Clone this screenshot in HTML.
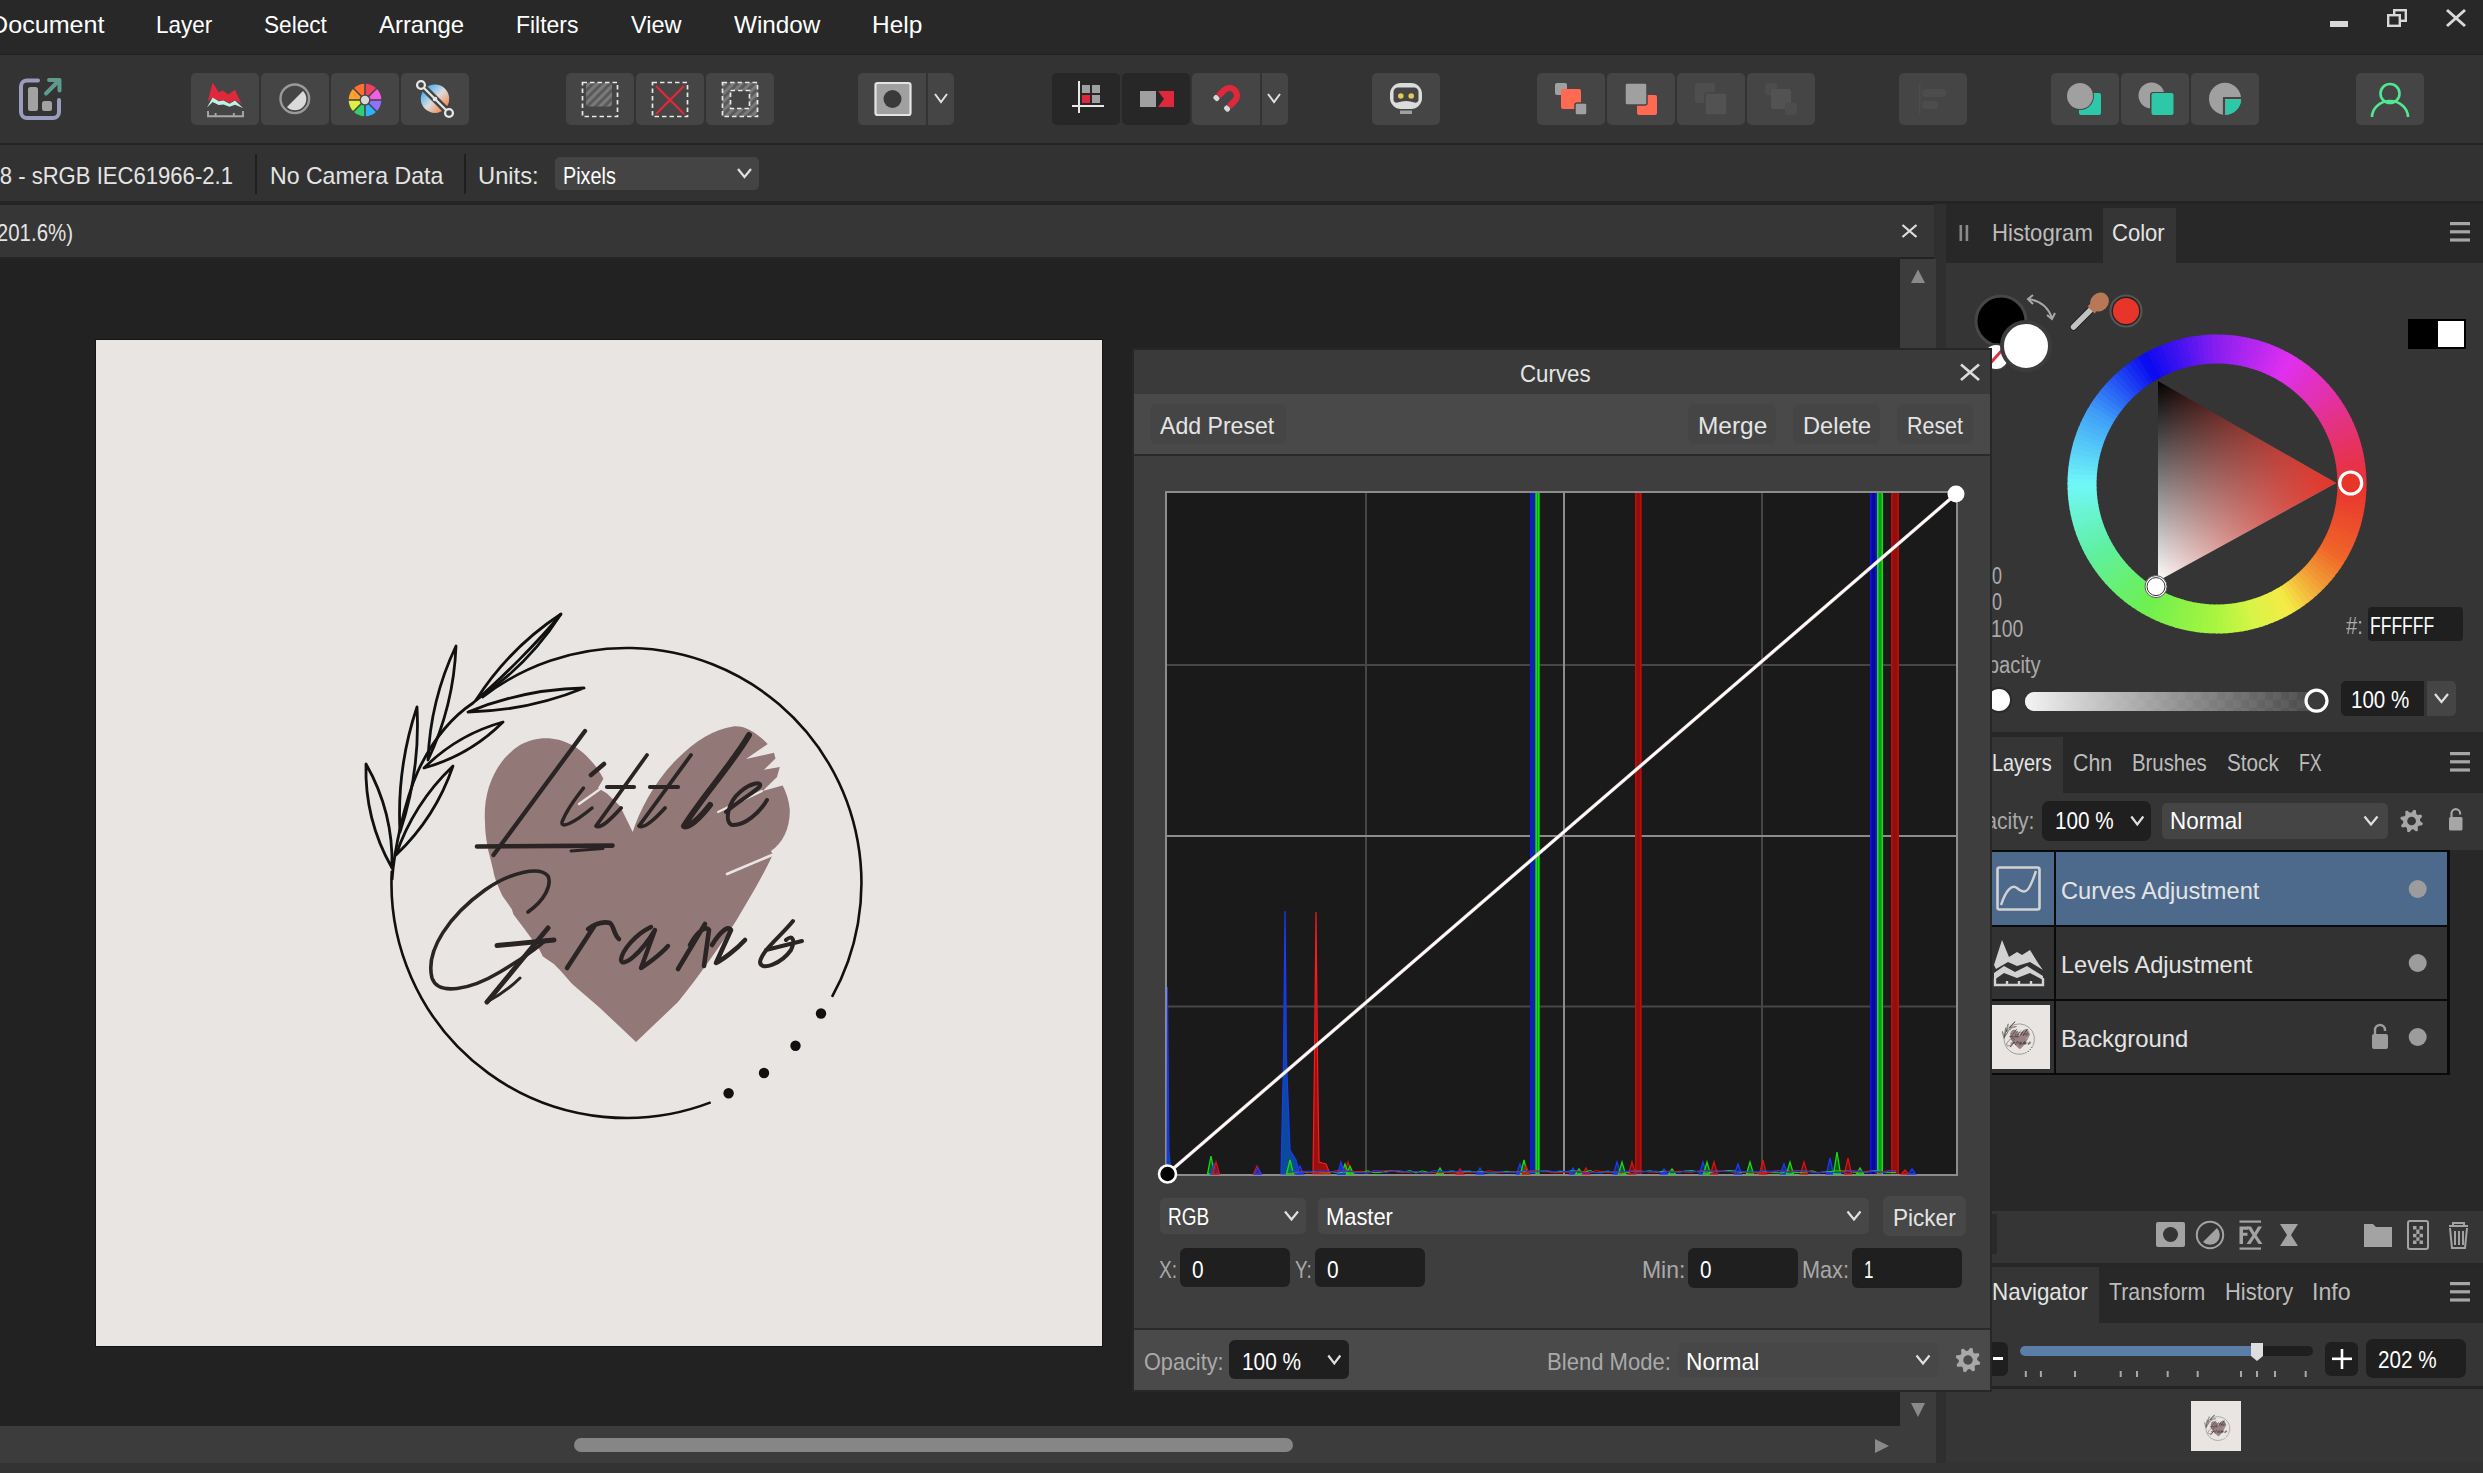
<!DOCTYPE html>
<html><head><meta charset="utf-8"><style>
html,body{margin:0;padding:0;width:2483px;height:1473px;overflow:hidden;background:#222;}
.r{position:absolute;}
.tx{position:absolute;font-family:"Liberation Sans",sans-serif;white-space:nowrap;transform-origin:0 0;}
</style></head><body>
<div class="r" style="left:0px;top:0px;width:2483px;height:54px;background:#282828;"></div>
<div class="r" style="left:0px;top:54px;width:2483px;height:1px;background:#202020;"></div>
<div class="r" style="left:0px;top:55px;width:2483px;height:88px;background:#333333;"></div>
<div class="r" style="left:0px;top:143px;width:2483px;height:2px;background:#232323;"></div>
<div class="r" style="left:0px;top:145px;width:2483px;height:56px;background:#323232;"></div>
<div class="r" style="left:0px;top:201px;width:2483px;height:4px;background:#242424;"></div>
<div class="r" style="left:0px;top:205px;width:1934px;height:52px;background:#363636;"></div>
<div class="r" style="left:0px;top:257px;width:1900px;height:2px;background:#262626;"></div>
<div class="r" style="left:1934px;top:204px;width:12px;height:1269px;background:#2f2f2f;"></div>
<div class="r" style="left:0px;top:259px;width:1900px;height:1167px;background:#222222;"></div>
<div class="r" style="left:1900px;top:259px;width:36px;height:1204px;background:#3c3c3c;"></div>
<div class="r" style="left:0px;top:1426px;width:1900px;height:37px;background:#3c3c3c;"></div>
<div class="r" style="left:0px;top:1463px;width:1946px;height:10px;background:#333333;"></div>
<div class="r" style="left:574px;top:1438px;width:719px;height:14px;background:#868686;border-radius:7px;"></div>
<svg class="r" style="left:0;top:0" width="2483" height="1473"><g fill="#8a8a8a"><polygon points="1911,283 1925,283 1918,269.5"/><polygon points="1911,1403 1925,1403 1918,1417"/><polygon points="1875,1439 1875,1453 1889,1446"/></g></svg>
<div class="r" style="left:191px;top:73px;width:68px;height:52px;background:#454545;border-radius:5px;"></div>
<div class="r" style="left:261px;top:73px;width:68px;height:52px;background:#454545;border-radius:5px;"></div>
<div class="r" style="left:331px;top:73px;width:68px;height:52px;background:#454545;border-radius:5px;"></div>
<div class="r" style="left:401px;top:73px;width:68px;height:52px;background:#454545;border-radius:5px;"></div>
<div class="r" style="left:566px;top:73px;width:68px;height:52px;background:#454545;border-radius:5px;"></div>
<div class="r" style="left:636px;top:73px;width:68px;height:52px;background:#454545;border-radius:5px;"></div>
<div class="r" style="left:706px;top:73px;width:68px;height:52px;background:#454545;border-radius:5px;"></div>
<div class="r" style="left:858px;top:73px;width:68px;height:52px;background:#454545;border-radius:5px 0 0 5px;"></div>
<div class="r" style="left:928px;top:73px;width:26px;height:52px;background:#454545;border-radius:0 5px 5px 0;"></div>
<div class="r" style="left:1052px;top:73px;width:68px;height:52px;background:#272727;border-radius:5px;"></div>
<div class="r" style="left:1122px;top:73px;width:68px;height:52px;background:#272727;border-radius:5px;"></div>
<div class="r" style="left:1192px;top:73px;width:68px;height:52px;background:#454545;border-radius:5px 0 0 5px;"></div>
<div class="r" style="left:1262px;top:73px;width:26px;height:52px;background:#454545;border-radius:0 5px 5px 0;"></div>
<div class="r" style="left:1372px;top:73px;width:68px;height:52px;background:#454545;border-radius:5px;"></div>
<div class="r" style="left:1537px;top:73px;width:68px;height:52px;background:#454545;border-radius:5px;"></div>
<div class="r" style="left:1607px;top:73px;width:68px;height:52px;background:#454545;border-radius:5px;"></div>
<div class="r" style="left:1677px;top:73px;width:68px;height:52px;background:#454545;border-radius:5px;"></div>
<div class="r" style="left:1747px;top:73px;width:68px;height:52px;background:#454545;border-radius:5px;"></div>
<div class="r" style="left:1899px;top:73px;width:68px;height:52px;background:#454545;border-radius:5px;"></div>
<div class="r" style="left:2051px;top:73px;width:68px;height:52px;background:#454545;border-radius:5px;"></div>
<div class="r" style="left:2121px;top:73px;width:68px;height:52px;background:#454545;border-radius:5px;"></div>
<div class="r" style="left:2191px;top:73px;width:68px;height:52px;background:#454545;border-radius:5px;"></div>
<div class="r" style="left:2356px;top:73px;width:68px;height:52px;background:#454545;border-radius:5px;"></div>
<div class="r" style="left:255px;top:154px;width:2px;height:40px;background:#1f1f1f;"></div>
<div class="r" style="left:464px;top:154px;width:2px;height:40px;background:#1f1f1f;"></div>
<div class="r" style="left:555px;top:157px;width:204px;height:33px;background:#444444;border-radius:5px;"></div>
<svg class="r" style="left:0;top:0" width="2483" height="260" viewBox="0 0 2483 260"><defs><linearGradient id="blob" x1="0" y1="0" x2="1" y2="1"><stop offset="0" stop-color="#2a9cf0"/><stop offset="0.5" stop-color="#e8e8f0"/><stop offset="1" stop-color="#f07830"/></linearGradient><pattern id="hatch" width="6" height="6" patternUnits="userSpaceOnUse" patternTransform="rotate(45)"><rect width="6" height="6" fill="#5a5a5a"/><rect width="3" height="6" fill="#7a7a7a"/></pattern></defs><polyline points="738.0,169.0 744.5,177.0 751.0,169.0" fill="none" stroke="#e0e0e0" stroke-width="2.2"/><path d="M38,80.5 H27 a6,6 0 0 0 -6,6 V112 a6,6 0 0 0 6,6 H53 a6,6 0 0 0 6,-6 V100" fill="none" stroke="#9a9cbb" stroke-width="4" stroke-linecap="round"/><rect x="28" y="87" width="10" height="24" rx="2.5" fill="#a2a2a2"/><rect x="42" y="101" width="10" height="10" rx="2.5" fill="#a2a2a2"/><path d="M46,93.5 L57.5,82" stroke="#5f9a8c" stroke-width="4" stroke-linecap="round"/><path d="M49,80 H59.5 V90.5" fill="none" stroke="#5f9a8c" stroke-width="4" stroke-linecap="round" stroke-linejoin="round"/><path d="M207.8,101.5 L212.6,82.5 L218.7,92.2 L222.9,90.4 L228.3,94.6 L235,89.8 L241.5,104 L235,100 L229.5,103 L223.5,100 L218.7,101 L212.6,97.6 Z" fill="#e0283c"/><path d="M207,107.5 L212.6,97.6 L218.7,101.2 L223.5,100.6 L229.5,103.7 L235,100.6 L243,107.9 L235,104.8 L229.5,106.8 L223.5,104.5 L218.7,105 L212.6,102 Z" fill="#bdf3e6"/><path d="M208,111 V116.3 H243 V111 M215.6,113 V116 M233.8,113 V116" fill="none" stroke="#a8a8a8" stroke-width="1.9"/><circle cx="294.8" cy="98.8" r="14.3" fill="none" stroke="#9a9a9a" stroke-width="2.4"/><path d="M303,91 A11.3,11.3 0 0 1 287,107 Z" fill="#dadada"/><path d="M365,100 L365.00,83.70 A16.3,16.3 0 0 1 376.53,88.47 Z" fill="#f04060"/><path d="M365,100 L376.53,88.47 A16.3,16.3 0 0 1 381.30,100.00 Z" fill="#f060e0"/><path d="M365,100 L381.30,100.00 A16.3,16.3 0 0 1 376.53,111.53 Z" fill="#9070ff"/><path d="M365,100 L376.53,111.53 A16.3,16.3 0 0 1 365.00,116.30 Z" fill="#30b0ff"/><path d="M365,100 L365.00,116.30 A16.3,16.3 0 0 1 353.47,111.53 Z" fill="#30d070"/><path d="M365,100 L353.47,111.53 A16.3,16.3 0 0 1 348.70,100.00 Z" fill="#e0f040"/><path d="M365,100 L348.70,100.00 A16.3,16.3 0 0 1 353.47,88.47 Z" fill="#ffa030"/><path d="M365,100 L353.47,88.47 A16.3,16.3 0 0 1 365.00,83.70 Z" fill="#ff7030"/><line x1="365" y1="100" x2="365.00" y2="83.00" stroke="#454545" stroke-width="1.6"/><line x1="365" y1="100" x2="377.02" y2="87.98" stroke="#454545" stroke-width="1.6"/><line x1="365" y1="100" x2="382.00" y2="100.00" stroke="#454545" stroke-width="1.6"/><line x1="365" y1="100" x2="377.02" y2="112.02" stroke="#454545" stroke-width="1.6"/><line x1="365" y1="100" x2="365.00" y2="117.00" stroke="#454545" stroke-width="1.6"/><line x1="365" y1="100" x2="352.98" y2="112.02" stroke="#454545" stroke-width="1.6"/><line x1="365" y1="100" x2="348.00" y2="100.00" stroke="#454545" stroke-width="1.6"/><line x1="365" y1="100" x2="352.98" y2="87.98" stroke="#454545" stroke-width="1.6"/><circle cx="365" cy="100" r="5.5" fill="#454545"/><circle cx="365" cy="100" r="4.2" fill="#d8d8d8"/><defs><linearGradient id="blob2" gradientUnits="userSpaceOnUse" x1="423" y1="87" x2="447" y2="111"><stop offset="0" stop-color="#2aa8f8"/><stop offset="0.5" stop-color="#dcdcdc"/><stop offset="1" stop-color="#f87a30"/></linearGradient><clipPath id="blobclip"><circle cx="435" cy="98.8" r="14.2"/></clipPath></defs><g clip-path="url(#blobclip)"><rect x="418" y="82" width="34" height="34" fill="url(#blob2)"/></g><line x1="421" y1="85" x2="449" y2="113" stroke="#454545" stroke-width="7"/><line x1="421" y1="85" x2="449" y2="113" stroke="#e8e8e8" stroke-width="2.2"/><circle cx="421" cy="85" r="3.9" fill="#454545" stroke="#e8e8e8" stroke-width="2.3"/><circle cx="449" cy="113" r="3.9" fill="#454545" stroke="#e8e8e8" stroke-width="2.3"/><circle cx="435" cy="99" r="2.3" fill="#e8e8e8"/><rect x="586" y="82.5" width="26" height="24" rx="3" fill="url(#hatch)"/><rect x="582.5" y="82.5" width="35" height="34" stroke="#e8e8e8" stroke-width="1.7" stroke-dasharray="4.5,3" fill="none"/><rect x="652.5" y="82.5" width="35" height="34" stroke="#e8e8e8" stroke-width="1.7" stroke-dasharray="4.5,3" fill="none"/><path d="M656,86 L684,114 M684,86 L656,114" stroke="#e0283c" stroke-width="2.4"/><rect x="722.5" y="82.5" width="35" height="34" fill="url(#hatch)"/><rect x="730.5" y="90.5" width="19" height="18" fill="#454545"/><rect x="722.5" y="82.5" width="35" height="34" stroke="#e8e8e8" stroke-width="1.7" stroke-dasharray="4.5,3" fill="none"/><rect x="730.5" y="90.5" width="19" height="18" stroke="#e8e8e8" stroke-width="1.7" stroke-dasharray="4.5,3" fill="none"/><rect x="875.5" y="83" width="35" height="32" rx="2" fill="#a0a0a0" stroke="#e4e4e4" stroke-width="2.2"/><circle cx="892.5" cy="99" r="9" fill="#3a3a3a"/><polyline points="935.0,94.0 941,102.0 947.0,94.0" fill="none" stroke="#e0e0e0" stroke-width="2"/><rect x="1078" y="81" width="2" height="32" fill="#e8e8e8"/><rect x="1072" y="105" width="32" height="2" fill="#e8e8e8"/><rect x="1082" y="85" width="8" height="8" fill="#a0a0a0"/><rect x="1092" y="85" width="8" height="8" fill="#a0a0a0"/><rect x="1082" y="95" width="8" height="8" fill="#e0283c"/><rect x="1092" y="95" width="8" height="8" fill="#a0a0a0"/><rect x="1140" y="91" width="16" height="16" fill="#a0a0a0"/><path d="M1158,91 h16 v16 h-16 l6,-8 z" fill="#e0283c"/><g transform="translate(1229.5 95.5) rotate(45)"><path d="M-7.5,8 V0 A7.5,7.5 0 0 1 7.5,0 V8" fill="none" stroke="#e0283c" stroke-width="6.2"/><rect x="-10.6" y="8.5" width="6.2" height="5" rx="2" fill="#d8d8d8"/><rect x="4.4" y="8.5" width="6.2" height="5" rx="2" fill="#d8d8d8"/></g><polyline points="1268.0,94.0 1274,102.0 1280.0,94.0" fill="none" stroke="#e0e0e0" stroke-width="2"/><rect x="1390" y="83" width="32" height="26" rx="11" fill="#dcdcdc"/><path d="M1398,87.5 H1414 a4.5,4.5 0 0 1 4.5,4.5 V100 a3,3 0 0 1 -4,2.5 Q1406,99.5 1397.5,102.5 a3,3 0 0 1 -4,-2.5 V92 a4.5,4.5 0 0 1 4.5,-4.5 Z" fill="#454545"/><circle cx="1400.8" cy="96" r="2.8" fill="#e8c850"/><circle cx="1411.2" cy="96" r="2.8" fill="#e8c850"/><rect x="1400" y="110.5" width="12" height="3.5" fill="#a0a0a0"/><rect x="1555" y="83" width="12" height="12" rx="2" fill="#a0a0a0"/><rect x="1561" y="89" width="20" height="20" rx="2" fill="#ff6a50"/><rect x="1575" y="103" width="12" height="12" rx="2" fill="#a0a0a0" stroke="#454545" stroke-width="1.5"/><rect x="1565" y="93" width="0" height="0"/><rect x="1637" y="95" width="20" height="20" rx="2" fill="#ff6a50"/><rect x="1625" y="83" width="22" height="22" rx="2" fill="#a0a0a0" stroke="#454545" stroke-width="1.5"/><rect x="1695" y="83" width="20" height="20" rx="2" fill="#4e4e4e"/><rect x="1705" y="93" width="22" height="22" rx="2" fill="#525252" stroke="#454545" stroke-width="1.5"/><rect x="1765" y="83" width="12" height="12" rx="2" fill="#4c4c4c"/><rect x="1771" y="89" width="20" height="20" rx="2" fill="#525252"/><rect x="1785" y="103" width="12" height="12" rx="2" fill="#4c4c4c"/><rect x="1919" y="83" width="1.5" height="31" fill="#4c4c4c"/><rect x="1922" y="89" width="24" height="8" rx="3" fill="#4c4c4c"/><rect x="1922" y="101" width="16" height="8" rx="3" fill="#4c4c4c"/><rect x="2079" y="93" width="22" height="22" rx="2" fill="#2cc8a8"/><circle cx="2080" cy="96" r="14" fill="#454545"/><circle cx="2080" cy="96" r="13" fill="#a0a0a0"/><circle cx="2151.5" cy="95.5" r="13" fill="#a0a0a0"/><rect x="2150" y="92" width="24" height="24" rx="3" fill="#454545"/><rect x="2151.5" y="93" width="22" height="22" rx="2" fill="#2cc8a8"/><circle cx="2225" cy="98.7" r="16" fill="#a0a0a0"/><path d="M2225.5,99.5 h15.7 A16,16 0 0 1 2225.5,114.7 Z" fill="#2cc8a8"/><path d="M2224,114.8 V98 h17.5" fill="none" stroke="#454545" stroke-width="2.2"/><circle cx="2390" cy="93.5" r="9.5" fill="none" stroke="#50e890" stroke-width="2.6"/><path d="M2372,117 A18,16 0 0 1 2408,117" fill="none" stroke="#50e890" stroke-width="2.6"/><rect x="2330" y="21" width="18" height="6" fill="#d8d8d8"/><rect x="2394.2" y="10.2" width="11.6" height="10.6" fill="none" stroke="#d8d8d8" stroke-width="2.4"/><rect x="2388.2" y="15.2" width="11.6" height="10.6" fill="#282828" stroke="#d8d8d8" stroke-width="2.4"/><path d="M2447,10 L2465,26 M2465,10 L2447,26" stroke="#d8d8d8" stroke-width="3"/><path d="M1902.5,225 L1916.5,237 M1916.5,225 L1902.5,237" stroke="#dedede" stroke-width="2.3"/></svg>
<div class="r" style="left:95px;top:339px;width:1008px;height:1008px;background:#141414"></div><div class="r" style="left:96px;top:340px;width:1006px;height:1006px;background:#e9e5e2"></div><svg class="r" style="left:0;top:0" width="1200" height="1400" viewBox="0 0 1200 1400"><path d="M485,822.7 C483,792 494,762 520,745 C535,737 553,735 572,745 C585,752 597,766 603.4,778.7 L598,788 L607,793.4 L620,806 L632.7,831.9 C640,810 654,782 677,759 C695,741 714,729 733,726.4 C746,725 758,734 767.7,744 L746,759 L774,752.8 L775.5,758.5 L764,769.8 L779.8,767 L777,777 L762.7,791 L782.6,785.5 C786,792 789,800 789.8,810 C790,828 783,843 771,851 L772.7,854.6 C765,872 751,896 736,921 C720,946 700,975 678,1002 L636,1042 L600,1008 L572.2,984 L559.4,969.4 L553.9,963.9 L542.9,956.6 L539.2,949.2 L524.5,929 L513.5,914.4 L511.7,908.9 L502.5,896 C497,884 494,876 493.3,870.4 L490.6,859.4 L487.8,848.4 C486,838 485,830 485,822.7 Z" fill="#937878"/>
<g stroke="#e9e5e2" stroke-linecap="round"><line x1="579" y1="804" x2="603" y2="787" stroke-width="2.4"/><line x1="718" y1="812" x2="762" y2="791" stroke-width="2"/><line x1="727" y1="874" x2="772" y2="855" stroke-width="2.6"/></g>
<path d="M481.8,697.8 A235,235 0 0 1 832.0,996.9" fill="none" stroke="#111" stroke-width="2.6"/>
<path d="M710.7,1102.4 A235,235 0 0 1 391.8,870.7" fill="none" stroke="#111" stroke-width="2.6"/>
<circle cx="821" cy="1013.5" r="5.2" fill="#111"/>
<circle cx="795.5" cy="1045.8" r="5.2" fill="#111"/>
<circle cx="764" cy="1073" r="5.2" fill="#111"/>
<circle cx="728.6" cy="1093.3" r="5.2" fill="#111"/>
<g fill="none" stroke="#111" stroke-width="2.8" stroke-linejoin="round">
<path d="M392,880 C394,850 405,800 418,771 C435,735 455,715 473,703 C500,680 540,640 561,614"/>
<path d="M392,868 Q393.6,812.4 366,764 Q364.4,819.6 392,868 Z"/>
<path d="M396,855 Q435.4,817.5 453,766 Q413.6,803.5 396,855 Z"/>
<path d="M400,832 Q420.4,771.1 417,707 Q396.6,767.9 400,832 Z"/>
<path d="M424,768 Q469.5,755.4 503,722 Q457.5,734.6 424,768 Z"/>
<path d="M428,760 Q453.7,705.9 456,646 Q430.3,700.1 428,760 Z"/>
<path d="M468,712 Q528.2,710.8 584,688 Q523.8,689.2 468,712 Z"/>
<path d="M476,700 Q527.7,666.1 561,614 Q509.3,647.9 476,700 Z"/>
</g>
<g fill="none" stroke="#2b2424" stroke-width="4" stroke-linecap="round" stroke-linejoin="round">
<path d="M585,731 L493.5,855" stroke-width="4.3"/>
<path d="M477,846.5 L612.5,845.6" stroke-width="4.6"/><path d="M571,851 L603,848.4" stroke-width="3"/>
<path d="M583.5,788 C574,800 565,814 562,822 C561,829 574,823 592,808" stroke-width="3.5"/><path d="M604,764 L591,775" stroke-width="4.5"/>
<path d="M647,755 L596,826 C601,829 611,819 621,808" stroke-width="3.8"/><path d="M607,787 L634,787" stroke-width="4.2"/>
<path d="M691,755 L639,826 C644,829 655,819 665,808" stroke-width="3.8"/><path d="M650,787 L678,787" stroke-width="4.2"/>
<path d="M749,735 C735,760 700,800 684,826 C688,829 700,818 710,805" stroke-width="6"/>
<path d="M726,812 C740,800 758,790 760,786 C762,781 750,783 740,792 C728,802 724,822 732,825 C745,826 760,812 767,800" stroke-width="4"/>
<path d="M528,912 C545,900 552,885 548,876 C540,866 510,872 485,890 C450,915 425,950 432,978 C438,996 470,990 500,972 C520,960 535,950 546,940" stroke-width="3.6"/>
<path d="M548,928 C530,950 505,980 487,1002" stroke-width="5"/><path d="M487,1002 C500,995 512,986 520,978" stroke-width="3"/>
<path d="M497,945.6 L554,940" stroke-width="5"/>
<path d="M595,925 L567,968 M588,929 C595,924 603,921 610,923 C614,926 614,935 619,939" stroke-width="4.6"/>
<path d="M651,927 C636,934 622,950 621,960 C622,968 640,955 655,930 L641,968 C646,965 660,955 668,946" stroke-width="4.4"/>
<path d="M705,924 L678,969 M690,945 C697,932 706,925 709,930 L704,966 M712,945 C720,932 728,925 731,930 L716,963 C722,960 736,950 745,940" stroke-width="4.6"/>
<path d="M793,921 C782,935 762,950 760,962 C761,972 782,963 791,950 C796,940 792,934 786,940 M766,950 L802,941" stroke-width="4"/>
</g></svg>
<div class="r" style="left:1946px;top:204px;width:537px;height:1269px;background:#353535;"></div>
<div class="r" style="left:1946px;top:204px;width:537px;height:59px;background:#282828;"></div>
<div class="r" style="left:2103px;top:208px;width:73px;height:55px;background:#353535;"></div>
<div class="r" style="left:1946px;top:732px;width:537px;height:4px;background:#272727;"></div>
<div class="r" style="left:1946px;top:736px;width:537px;height:57px;background:#282828;"></div>
<div class="r" style="left:1946px;top:737px;width:117px;height:56px;background:#353535;"></div>
<div class="r" style="left:1946px;top:850px;width:537px;height:361px;background:#282828;"></div>
<div class="r" style="left:1946px;top:850px;width:504px;height:225px;background:#0a0a0a;"></div>
<div class="r" style="left:1946px;top:852px;width:108px;height:73px;background:#4d6a8d;"></div>
<div class="r" style="left:2056px;top:852px;width:391px;height:73px;background:#4d6a8d;"></div>
<div class="r" style="left:1946px;top:927px;width:108px;height:72px;background:#323232;"></div>
<div class="r" style="left:2056px;top:927px;width:391px;height:72px;background:#323232;"></div>
<div class="r" style="left:1946px;top:1001px;width:108px;height:72px;background:#323232;"></div>
<div class="r" style="left:2056px;top:1001px;width:391px;height:72px;background:#323232;"></div>
<div class="r" style="left:1946px;top:1005px;width:104px;height:64px;background:#e9e5e2;"></div>
<div class="r" style="left:1946px;top:1211px;width:537px;height:52px;background:#353535;"></div>
<div class="r" style="left:1946px;top:1263px;width:537px;height:4px;background:#272727;"></div>
<div class="r" style="left:1946px;top:1267px;width:537px;height:56px;background:#282828;"></div>
<div class="r" style="left:1946px;top:1267px;width:153px;height:56px;background:#353535;"></div>
<div class="r" style="left:1991px;top:1214px;width:6px;height:40px;background:#2a2a2a;"></div>
<div class="r" style="left:1946px;top:1386px;width:537px;height:3px;background:#242424;"></div>
<div class="r" style="left:1946px;top:1389px;width:537px;height:73px;background:#363636;"></div>
<div class="r" style="left:1946px;top:1462px;width:537px;height:11px;background:#333333;"></div>
<div class="r" style="left:2191px;top:1401px;width:50px;height:50px;background:#e9e5e2;"></div>
<div class="r" style="left:2368px;top:607px;width:95px;height:34px;background:#1f1f1f;border-radius:4px;"></div>
<div class="r" style="left:2341px;top:681px;width:83px;height:35px;background:#1f1f1f;border-radius:5px 0 0 5px;"></div>
<div class="r" style="left:2427px;top:681px;width:29px;height:35px;background:#454545;border-radius:0 5px 5px 0;"></div>
<div class="r" style="left:2042px;top:801px;width:109px;height:40px;background:#1f1f1f;border-radius:7px;"></div>
<div class="r" style="left:2162px;top:803px;width:226px;height:36px;background:#454545;border-radius:5px;"></div>
<div class="r" style="left:1975px;top:1342px;width:33px;height:34px;background:#1f1f1f;border-radius:6px;"></div>
<div class="r" style="left:2325px;top:1342px;width:33px;height:34px;background:#1f1f1f;border-radius:6px;"></div>
<div class="r" style="left:2366px;top:1339px;width:100px;height:39px;background:#1f1f1f;border-radius:7px;"></div>
<div class="r" style="left:2408px;top:319px;width:58px;height:30px;background:#000;"></div>
<div class="r" style="left:2438px;top:321px;width:26px;height:26px;background:#fff;"></div>
<svg class="r" style="left:0;top:0" width="2483" height="1473" viewBox="0 0 2483 1473"><defs><linearGradient id="triBW" x1="0" y1="0" x2="0" y2="1"><stop offset="0" stop-color="#000"/><stop offset="1" stop-color="#fff"/></linearGradient><linearGradient id="triR" gradientUnits="userSpaceOnUse" x1="2158" y1="0" x2="2336" y2="0"><stop offset="0" stop-color="#e8352a" stop-opacity="0"/><stop offset="1" stop-color="#e8352a" stop-opacity="1"/></linearGradient><pattern id="chk" width="16" height="16" patternUnits="userSpaceOnUse" x="2025" y="692"><rect width="16" height="16" fill="#cfcfcf"/><rect width="8" height="8" fill="#9a9a9a"/><rect x="8" y="8" width="8" height="8" fill="#9a9a9a"/></pattern><linearGradient id="opg" x1="0" y1="0" x2="1" y2="0"><stop offset="0" stop-color="#f4f4f4" stop-opacity="1"/><stop offset="1" stop-color="#353535" stop-opacity="0.85"/></linearGradient><clipPath id="tclip"><rect x="2025" y="692" width="297" height="19" rx="9.5"/></clipPath></defs><rect x="1959.5" y="225" width="2.6" height="16" fill="#8a8a8a"/><rect x="1965.6" y="225" width="2.6" height="16" fill="#8a8a8a"/><rect x="2450" y="222.0" width="20" height="3.2" fill="#a6a6a6"/><rect x="2450" y="230.2" width="20" height="3.2" fill="#a6a6a6"/><rect x="2450" y="238.4" width="20" height="3.2" fill="#a6a6a6"/><rect x="2450" y="752.0" width="20" height="3.2" fill="#a6a6a6"/><rect x="2450" y="760.2" width="20" height="3.2" fill="#a6a6a6"/><rect x="2450" y="768.4" width="20" height="3.2" fill="#a6a6a6"/><rect x="2450" y="1282.0" width="20" height="3.2" fill="#a6a6a6"/><rect x="2450" y="1290.2" width="20" height="3.2" fill="#a6a6a6"/><rect x="2450" y="1298.4" width="20" height="3.2" fill="#a6a6a6"/><circle cx="2001" cy="321" r="25" fill="#000" stroke="#474747" stroke-width="3"/><circle cx="1996" cy="357" r="13" fill="#fff" stroke="#3a3a3a" stroke-width="2"/><path d="M1986,368 L2004,348" stroke="#e03040" stroke-width="3"/><circle cx="2026" cy="346" r="24" fill="#fff" stroke="#3c3c3c" stroke-width="4"/><path d="M2028,299 Q2046,301 2052,318" fill="none" stroke="#a8a8a8" stroke-width="2"/><polyline points="2033,295 2028,299 2033,304" fill="none" stroke="#a8a8a8" stroke-width="2"/><polyline points="2047,315 2052,319 2055,313" fill="none" stroke="#a8a8a8" stroke-width="2"/><line x1="2073.5" y1="327" x2="2091" y2="309.5" stroke="#222" stroke-width="7.5" stroke-linecap="round"/><line x1="2073.5" y1="327" x2="2091" y2="309.5" stroke="#c2c2c2" stroke-width="5.5" stroke-linecap="round"/><ellipse cx="2099.5" cy="302" rx="8.8" ry="10" transform="rotate(45 2099.5 302)" fill="#b87858"/><path d="M2089,305 L2096,312" stroke="#b87858" stroke-width="4"/><circle cx="2126" cy="311" r="15.5" fill="#222" stroke="#555" stroke-width="2.2"/><circle cx="2126" cy="311" r="13.1" fill="#e8352a"/><polygon points="2217.00,334.50 2223.26,334.63 2222.05,363.61 2217.00,363.50" fill="rgb(140, 31, 240)"/><polygon points="2222.22,334.59 2228.47,334.94 2226.24,363.86 2221.21,363.57" fill="rgb(146, 32, 240)"/><polygon points="2227.43,334.86 2233.66,335.43 2230.43,364.25 2225.41,363.79" fill="rgb(152, 33, 240)"/><polygon points="2232.63,335.32 2238.84,336.10 2234.60,364.79 2229.60,364.16" fill="rgb(158, 34, 240)"/><polygon points="2237.81,335.95 2243.99,336.96 2238.75,365.48 2233.77,364.67" fill="rgb(163, 36, 240)"/><polygon points="2242.96,336.77 2249.10,337.99 2242.88,366.31 2237.92,365.33" fill="rgb(169, 37, 240)"/><polygon points="2248.08,337.77 2254.18,339.20 2246.97,367.29 2242.05,366.13" fill="rgb(175, 38, 240)"/><polygon points="2253.17,338.94 2259.21,340.58 2251.02,368.40 2246.15,367.08" fill="rgb(181, 39, 240)"/><polygon points="2258.21,340.29 2264.19,342.14 2255.04,369.66 2250.21,368.17" fill="rgb(186, 40, 240)"/><polygon points="2263.20,341.82 2269.11,343.88 2259.00,371.06 2254.24,369.40" fill="rgb(192, 41, 240)"/><polygon points="2268.13,343.52 2273.97,345.78 2262.92,372.59 2258.21,370.77" fill="rgb(198, 42, 240)"/><polygon points="2273.00,345.39 2278.76,347.85 2266.78,374.26 2262.14,372.27" fill="rgb(203, 44, 240)"/><polygon points="2277.81,347.42 2283.47,350.09 2270.58,376.07 2266.01,373.92" fill="rgb(209, 45, 240)"/><polygon points="2282.54,349.63 2288.11,352.49 2274.31,378.00 2269.82,375.70" fill="rgb(215, 46, 240)"/><polygon points="2287.19,352.00 2292.65,355.05 2277.98,380.07 2273.57,377.60" fill="rgb(221, 47, 240)"/><polygon points="2291.75,354.53 2297.11,357.77 2281.57,382.26 2277.25,379.64" fill="rgb(224, 48, 236)"/><polygon points="2296.22,357.22 2301.46,360.65 2285.08,384.57 2280.86,381.81" fill="rgb(224, 48, 230)"/><polygon points="2300.60,360.06 2305.72,363.67 2288.51,387.01 2284.38,384.10" fill="rgb(224, 48, 223)"/><polygon points="2304.87,363.05 2309.86,366.84 2291.85,389.56 2287.83,386.51" fill="rgb(224, 48, 216)"/><polygon points="2309.04,366.19 2313.89,370.15 2295.10,392.23 2291.19,389.04" fill="rgb(225, 48, 210)"/><polygon points="2313.10,369.48 2317.81,373.60 2298.25,395.02 2294.46,391.69" fill="rgb(225, 48, 203)"/><polygon points="2317.04,372.90 2321.60,377.19 2301.31,397.91 2297.63,394.45" fill="rgb(225, 48, 196)"/><polygon points="2320.85,376.46 2325.26,380.90 2304.26,400.90 2300.71,397.32" fill="rgb(226, 49, 190)"/><polygon points="2324.54,380.15 2328.80,384.74 2307.11,404.00 2303.68,400.29" fill="rgb(226, 49, 183)"/><polygon points="2328.10,383.96 2332.19,388.71 2309.85,407.19 2306.55,403.37" fill="rgb(226, 49, 176)"/><polygon points="2331.52,387.90 2335.45,392.78 2312.47,410.48 2309.31,406.54" fill="rgb(226, 49, 170)"/><polygon points="2334.81,391.96 2338.56,396.97 2314.98,413.85 2311.96,409.81" fill="rgb(227, 49, 163)"/><polygon points="2337.95,396.13 2341.52,401.27 2317.37,417.32 2314.49,413.17" fill="rgb(227, 49, 156)"/><polygon points="2340.94,400.40 2344.33,405.66 2319.63,420.86 2316.90,416.62" fill="rgb(227, 49, 150)"/><polygon points="2343.78,404.78 2346.99,410.16 2321.77,424.48 2319.19,420.14" fill="rgb(227, 49, 143)"/><polygon points="2346.47,409.25 2349.49,414.74 2323.79,428.17 2321.36,423.75" fill="rgb(228, 50, 137)"/><polygon points="2349.00,413.81 2351.82,419.40 2325.67,431.93 2323.40,427.43" fill="rgb(228, 50, 131)"/><polygon points="2351.37,418.46 2354.00,424.15 2327.42,435.76 2325.30,431.18" fill="rgb(228, 50, 125)"/><polygon points="2353.58,423.19 2356.00,428.97 2329.04,439.64 2327.08,434.99" fill="rgb(228, 50, 119)"/><polygon points="2355.61,428.00 2357.84,433.85 2330.52,443.58 2328.73,438.86" fill="rgb(229, 50, 113)"/><polygon points="2357.48,432.87 2359.50,438.80 2331.86,447.56 2330.23,442.79" fill="rgb(229, 50, 107)"/><polygon points="2359.18,437.80 2360.99,443.80 2333.06,451.60 2331.60,446.76" fill="rgb(229, 50, 101)"/><polygon points="2360.71,442.79 2362.31,448.85 2334.12,455.67 2332.83,450.79" fill="rgb(230, 50, 95)"/><polygon points="2362.06,447.83 2363.45,453.94 2335.04,459.77 2333.92,454.85" fill="rgb(230, 50, 89)"/><polygon points="2363.23,452.92 2364.41,459.07 2335.81,463.90 2334.87,458.95" fill="rgb(230, 50, 83)"/><polygon points="2364.23,458.04 2365.19,464.23 2336.44,468.06 2335.67,463.08" fill="rgb(230, 50, 77)"/><polygon points="2365.05,463.19 2365.79,469.41 2336.92,472.24 2336.33,467.23" fill="rgb(231, 50, 71)"/><polygon points="2365.68,468.37 2366.20,474.61 2337.26,476.43 2336.84,471.40" fill="rgb(231, 50, 65)"/><polygon points="2366.14,473.57 2366.44,479.83 2337.45,480.64 2337.21,475.59" fill="rgb(231, 50, 59)"/><polygon points="2366.41,478.78 2366.50,485.04 2337.50,484.84 2337.43,479.79" fill="rgb(231, 50, 53)"/><polygon points="2366.50,484.00 2366.37,490.26 2337.39,489.05 2337.50,484.00" fill="rgb(232, 51, 49)"/><polygon points="2366.41,489.22 2366.06,495.47 2337.14,493.24 2337.43,488.21" fill="rgb(232, 55, 49)"/><polygon points="2366.14,494.43 2365.57,500.66 2336.75,497.43 2337.21,492.41" fill="rgb(233, 58, 48)"/><polygon points="2365.68,499.63 2364.90,505.84 2336.21,501.60 2336.84,496.60" fill="rgb(233, 61, 47)"/><polygon points="2365.05,504.81 2364.04,510.99 2335.52,505.75 2336.33,500.77" fill="rgb(234, 65, 47)"/><polygon points="2364.23,509.96 2363.01,516.10 2334.69,509.88 2335.67,504.92" fill="rgb(234, 68, 46)"/><polygon points="2363.23,515.08 2361.80,521.18 2333.71,513.97 2334.87,509.05" fill="rgb(235, 71, 45)"/><polygon points="2362.06,520.17 2360.42,526.21 2332.60,518.02 2333.92,513.15" fill="rgb(236, 75, 45)"/><polygon points="2360.71,525.21 2358.86,531.19 2331.34,522.04 2332.83,517.21" fill="rgb(236, 78, 44)"/><polygon points="2359.18,530.20 2357.12,536.11 2329.94,526.00 2331.60,521.24" fill="rgb(237, 81, 43)"/><polygon points="2357.48,535.13 2355.22,540.97 2328.41,529.92 2330.23,525.21" fill="rgb(237, 85, 43)"/><polygon points="2355.61,540.00 2353.15,545.76 2326.74,533.78 2328.73,529.14" fill="rgb(238, 88, 42)"/><polygon points="2353.58,544.81 2350.91,550.47 2324.93,537.58 2327.08,533.01" fill="rgb(238, 91, 41)"/><polygon points="2351.37,549.54 2348.51,555.11 2323.00,541.31 2325.30,536.82" fill="rgb(239, 95, 41)"/><polygon points="2349.00,554.19 2345.95,559.65 2320.93,544.98 2323.40,540.57" fill="rgb(239, 98, 40)"/><polygon points="2346.47,558.75 2343.23,564.11 2318.74,548.57 2321.36,544.25" fill="rgb(240, 104, 41)"/><polygon points="2343.78,563.22 2340.35,568.46 2316.43,552.08 2319.19,547.86" fill="rgb(240, 112, 43)"/><polygon points="2340.94,567.60 2337.33,572.72 2313.99,555.51 2316.90,551.38" fill="rgb(240, 120, 45)"/><polygon points="2337.95,571.87 2334.16,576.86 2311.44,558.85 2314.49,554.83" fill="rgb(240, 128, 47)"/><polygon points="2334.81,576.04 2330.85,580.89 2308.77,562.10 2311.96,558.19" fill="rgb(241, 136, 49)"/><polygon points="2331.52,580.10 2327.40,584.81 2305.98,565.25 2309.31,561.46" fill="rgb(241, 144, 51)"/><polygon points="2328.10,584.04 2323.81,588.60 2303.09,568.31 2306.55,564.63" fill="rgb(241, 152, 53)"/><polygon points="2324.54,587.85 2320.10,592.26 2300.10,571.26 2303.68,567.71" fill="rgb(242, 160, 55)"/><polygon points="2320.85,591.54 2316.26,595.80 2297.00,574.11 2300.71,570.68" fill="rgb(242, 170, 57)"/><polygon points="2317.04,595.10 2312.29,599.19 2293.81,576.85 2297.63,573.55" fill="rgb(242, 180, 59)"/><polygon points="2313.10,598.52 2308.22,602.45 2290.52,579.47 2294.46,576.31" fill="rgb(243, 190, 61)"/><polygon points="2309.04,601.81 2304.03,605.56 2287.15,581.98 2291.19,578.96" fill="rgb(243, 200, 63)"/><polygon points="2304.87,604.95 2299.73,608.52 2283.68,584.37 2287.83,581.49" fill="rgb(244, 210, 65)"/><polygon points="2300.60,607.94 2295.34,611.33 2280.14,586.63 2284.38,583.90" fill="rgb(244, 220, 67)"/><polygon points="2296.22,610.78 2290.84,613.99 2276.52,588.77 2280.86,586.19" fill="rgb(244, 230, 69)"/><polygon points="2291.75,613.47 2286.26,616.49 2272.83,590.79 2277.25,588.36" fill="rgb(243, 235, 70)"/><polygon points="2287.19,616.00 2281.60,618.82 2269.07,592.67 2273.57,590.40" fill="rgb(239, 237, 70)"/><polygon points="2282.54,618.37 2276.85,621.00 2265.24,594.42 2269.82,592.30" fill="rgb(235, 238, 70)"/><polygon points="2277.81,620.58 2272.03,623.00 2261.36,596.04 2266.01,594.08" fill="rgb(231, 239, 70)"/><polygon points="2273.00,622.61 2267.15,624.84 2257.42,597.52 2262.14,595.73" fill="rgb(227, 241, 70)"/><polygon points="2268.13,624.48 2262.20,626.50 2253.44,598.86 2258.21,597.23" fill="rgb(223, 242, 70)"/><polygon points="2263.20,626.18 2257.20,627.99 2249.40,600.06 2254.24,598.60" fill="rgb(219, 243, 70)"/><polygon points="2258.21,627.71 2252.15,629.31 2245.33,601.12 2250.21,599.83" fill="rgb(215, 245, 70)"/><polygon points="2253.17,629.06 2247.06,630.45 2241.23,602.04 2246.15,600.92" fill="rgb(209, 245, 69)"/><polygon points="2248.08,630.23 2241.93,631.41 2237.10,602.81 2242.05,601.87" fill="rgb(203, 245, 68)"/><polygon points="2242.96,631.23 2236.77,632.19 2232.94,603.44 2237.92,602.67" fill="rgb(197, 245, 67)"/><polygon points="2237.81,632.05 2231.59,632.79 2228.76,603.92 2233.77,603.33" fill="rgb(191, 245, 66)"/><polygon points="2232.63,632.68 2226.39,633.20 2224.57,604.26 2229.60,603.84" fill="rgb(185, 245, 66)"/><polygon points="2227.43,633.14 2221.17,633.44 2220.36,604.45 2225.41,604.21" fill="rgb(179, 245, 65)"/><polygon points="2222.22,633.41 2215.96,633.50 2216.16,604.50 2221.21,604.43" fill="rgb(173, 245, 64)"/><polygon points="2217.00,633.50 2210.74,633.37 2211.95,604.39 2217.00,604.50" fill="rgb(168, 244, 64)"/><polygon points="2211.78,633.41 2205.53,633.06 2207.76,604.14 2212.79,604.43" fill="rgb(164, 244, 65)"/><polygon points="2206.57,633.14 2200.34,632.57 2203.57,603.75 2208.59,604.21" fill="rgb(160, 244, 66)"/><polygon points="2201.37,632.68 2195.16,631.90 2199.40,603.21 2204.40,603.84" fill="rgb(156, 243, 67)"/><polygon points="2196.19,632.05 2190.01,631.04 2195.25,602.52 2200.23,603.33" fill="rgb(152, 243, 68)"/><polygon points="2191.04,631.23 2184.90,630.01 2191.12,601.69 2196.08,602.67" fill="rgb(148, 243, 69)"/><polygon points="2185.92,630.23 2179.82,628.80 2187.03,600.71 2191.95,601.87" fill="rgb(144, 242, 70)"/><polygon points="2180.83,629.06 2174.79,627.42 2182.98,599.60 2187.85,600.92" fill="rgb(140, 242, 72)"/><polygon points="2175.79,627.71 2169.81,625.86 2178.96,598.34 2183.79,599.83" fill="rgb(136, 242, 73)"/><polygon points="2170.80,626.18 2164.89,624.12 2175.00,596.94 2179.76,598.60" fill="rgb(132, 241, 74)"/><polygon points="2165.87,624.48 2160.03,622.22 2171.08,595.41 2175.79,597.23" fill="rgb(128, 241, 75)"/><polygon points="2161.00,622.61 2155.24,620.15 2167.22,593.74 2171.86,595.73" fill="rgb(124, 241, 76)"/><polygon points="2156.19,620.58 2150.53,617.91 2163.42,591.93 2167.99,594.08" fill="rgb(120, 240, 77)"/><polygon points="2151.46,618.37 2145.89,615.51 2159.69,590.00 2164.18,592.30" fill="rgb(116, 240, 78)"/><polygon points="2146.81,616.00 2141.35,612.95 2156.02,587.93 2160.43,590.40" fill="rgb(112, 240, 79)"/><polygon points="2142.25,613.47 2136.89,610.23 2152.43,585.74 2156.75,588.36" fill="rgb(109, 240, 82)"/><polygon points="2137.78,610.78 2132.54,607.35 2148.92,583.43 2153.14,586.19" fill="rgb(108, 240, 88)"/><polygon points="2133.40,607.94 2128.28,604.33 2145.49,580.99 2149.62,583.90" fill="rgb(107, 240, 93)"/><polygon points="2129.13,604.95 2124.14,601.16 2142.15,578.44 2146.17,581.49" fill="rgb(106, 240, 98)"/><polygon points="2124.96,601.81 2120.11,597.85 2138.90,575.77 2142.81,578.96" fill="rgb(105, 240, 104)"/><polygon points="2120.90,598.52 2116.19,594.40 2135.75,572.98 2139.54,576.31" fill="rgb(104, 240, 109)"/><polygon points="2116.96,595.10 2112.40,590.81 2132.69,570.09 2136.37,573.55" fill="rgb(103, 240, 114)"/><polygon points="2113.15,591.54 2108.74,587.10 2129.74,567.10 2133.29,570.68" fill="rgb(103, 240, 120)"/><polygon points="2109.46,587.85 2105.20,583.26 2126.89,564.00 2130.32,567.71" fill="rgb(102, 240, 125)"/><polygon points="2105.90,584.04 2101.81,579.29 2124.15,560.81 2127.45,564.63" fill="rgb(101, 240, 130)"/><polygon points="2102.48,580.10 2098.55,575.22 2121.53,557.52 2124.69,561.46" fill="rgb(100, 240, 136)"/><polygon points="2099.19,576.04 2095.44,571.03 2119.02,554.15 2122.04,558.19" fill="rgb(99, 240, 141)"/><polygon points="2096.05,571.87 2092.48,566.73 2116.63,550.68 2119.51,554.83" fill="rgb(98, 240, 146)"/><polygon points="2093.06,567.60 2089.67,562.34 2114.37,547.14 2117.10,551.38" fill="rgb(97, 240, 152)"/><polygon points="2090.22,563.22 2087.01,557.84 2112.23,543.52 2114.81,547.86" fill="rgb(96, 240, 157)"/><polygon points="2087.53,558.75 2084.51,553.26 2110.21,539.83 2112.64,544.25" fill="rgb(96, 240, 162)"/><polygon points="2085.00,554.19 2082.18,548.60 2108.33,536.07 2110.60,540.57" fill="rgb(97, 240, 168)"/><polygon points="2082.63,549.54 2080.00,543.85 2106.58,532.24 2108.70,536.82" fill="rgb(98, 241, 174)"/><polygon points="2080.42,544.81 2078.00,539.03 2104.96,528.36 2106.92,533.01" fill="rgb(99, 241, 180)"/><polygon points="2078.39,540.00 2076.16,534.15 2103.48,524.42 2105.27,529.14" fill="rgb(100, 242, 186)"/><polygon points="2076.52,535.13 2074.50,529.20 2102.14,520.44 2103.77,525.21" fill="rgb(101, 242, 192)"/><polygon points="2074.82,530.20 2073.01,524.20 2100.94,516.40 2102.40,521.24" fill="rgb(102, 243, 198)"/><polygon points="2073.29,525.21 2071.69,519.15 2099.88,512.33 2101.17,517.21" fill="rgb(104, 244, 204)"/><polygon points="2071.94,520.17 2070.55,514.06 2098.96,508.23 2100.08,513.15" fill="rgb(105, 244, 209)"/><polygon points="2070.77,515.08 2069.59,508.93 2098.19,504.10 2099.13,509.05" fill="rgb(106, 245, 215)"/><polygon points="2069.77,509.96 2068.81,503.77 2097.56,499.94 2098.33,504.92" fill="rgb(107, 245, 221)"/><polygon points="2068.95,504.81 2068.21,498.59 2097.08,495.76 2097.67,500.77" fill="rgb(108, 246, 227)"/><polygon points="2068.32,499.63 2067.80,493.39 2096.74,491.57 2097.16,496.60" fill="rgb(109, 246, 233)"/><polygon points="2067.86,494.43 2067.56,488.17 2096.55,487.36 2096.79,492.41" fill="rgb(110, 247, 239)"/><polygon points="2067.59,489.22 2067.50,482.96 2096.50,483.16 2096.57,488.21" fill="rgb(111, 247, 245)"/><polygon points="2067.50,484.00 2067.63,477.74 2096.61,478.95 2096.50,484.00" fill="rgb(110, 245, 248)"/><polygon points="2067.59,478.78 2067.94,472.53 2096.86,474.76 2096.57,479.79" fill="rgb(107, 239, 248)"/><polygon points="2067.86,473.57 2068.43,467.34 2097.25,470.57 2096.79,475.59" fill="rgb(104, 233, 248)"/><polygon points="2068.32,468.37 2069.10,462.16 2097.79,466.40 2097.16,471.40" fill="rgb(100, 227, 248)"/><polygon points="2068.95,463.19 2069.96,457.01 2098.48,462.25 2097.67,467.23" fill="rgb(97, 221, 248)"/><polygon points="2069.77,458.04 2070.99,451.90 2099.31,458.12 2098.33,463.08" fill="rgb(94, 215, 248)"/><polygon points="2070.77,452.92 2072.20,446.82 2100.29,454.03 2099.13,458.95" fill="rgb(91, 209, 248)"/><polygon points="2071.94,447.83 2073.58,441.79 2101.40,449.98 2100.08,454.85" fill="rgb(88, 204, 248)"/><polygon points="2073.29,442.79 2075.14,436.81 2102.66,445.96 2101.17,450.79" fill="rgb(84, 198, 248)"/><polygon points="2074.82,437.80 2076.88,431.89 2104.06,442.00 2102.40,446.76" fill="rgb(81, 192, 248)"/><polygon points="2076.52,432.87 2078.78,427.03 2105.59,438.08 2103.77,442.79" fill="rgb(78, 186, 248)"/><polygon points="2078.39,428.00 2080.85,422.24 2107.26,434.22 2105.27,438.86" fill="rgb(75, 180, 248)"/><polygon points="2080.42,423.19 2083.09,417.53 2109.07,430.42 2106.92,434.99" fill="rgb(72, 174, 248)"/><polygon points="2082.63,418.46 2085.49,412.89 2111.00,426.69 2108.70,431.18" fill="rgb(68, 168, 248)"/><polygon points="2085.00,413.81 2088.05,408.35 2113.07,423.02 2110.60,427.43" fill="rgb(65, 162, 248)"/><polygon points="2087.53,409.25 2090.77,403.89 2115.26,419.43 2112.64,423.75" fill="rgb(62, 155, 247)"/><polygon points="2090.22,404.78 2093.65,399.54 2117.57,415.92 2114.81,420.14" fill="rgb(58, 145, 247)"/><polygon points="2093.06,400.40 2096.67,395.28 2120.01,412.49 2117.10,416.62" fill="rgb(55, 135, 246)"/><polygon points="2096.05,396.13 2099.84,391.14 2122.56,409.15 2119.51,413.17" fill="rgb(51, 125, 246)"/><polygon points="2099.19,391.96 2103.15,387.11 2125.23,405.90 2122.04,409.81" fill="rgb(47, 115, 245)"/><polygon points="2102.48,387.90 2106.60,383.19 2128.02,402.75 2124.69,406.54" fill="rgb(44, 105, 245)"/><polygon points="2105.90,383.96 2110.19,379.40 2130.91,399.69 2127.45,403.37" fill="rgb(40, 95, 244)"/><polygon points="2109.46,380.15 2113.90,375.74 2133.90,396.74 2130.32,400.29" fill="rgb(37, 85, 244)"/><polygon points="2113.15,376.46 2117.74,372.20 2137.00,393.89 2133.29,397.32" fill="rgb(33, 75, 243)"/><polygon points="2116.96,372.90 2121.71,368.81 2140.19,391.15 2136.37,394.45" fill="rgb(29, 65, 242)"/><polygon points="2120.90,369.48 2125.78,365.55 2143.48,388.53 2139.54,391.69" fill="rgb(26, 55, 242)"/><polygon points="2124.96,366.19 2129.97,362.44 2146.85,386.02 2142.81,389.04" fill="rgb(22, 44, 241)"/><polygon points="2129.13,363.05 2134.27,359.48 2150.32,383.63 2146.17,386.51" fill="rgb(19, 35, 241)"/><polygon points="2133.40,360.06 2138.66,356.67 2153.86,381.37 2149.62,384.10" fill="rgb(15, 25, 240)"/><polygon points="2137.78,357.22 2143.16,354.01 2157.48,379.23 2153.14,381.81" fill="rgb(11, 15, 240)"/><polygon points="2142.25,354.53 2147.74,351.51 2161.17,377.21 2156.75,379.64" fill="rgb(14, 10, 240)"/><polygon points="2146.81,352.00 2152.40,349.18 2164.93,375.33 2160.43,377.60" fill="rgb(22, 12, 240)"/><polygon points="2151.46,349.63 2157.15,347.00 2168.76,373.58 2164.18,375.70" fill="rgb(30, 13, 240)"/><polygon points="2156.19,347.42 2161.97,345.00 2172.64,371.96 2167.99,373.92" fill="rgb(38, 14, 240)"/><polygon points="2161.00,345.39 2166.85,343.16 2176.58,370.48 2171.86,372.27" fill="rgb(46, 16, 240)"/><polygon points="2165.87,343.52 2171.80,341.50 2180.56,369.14 2175.79,370.77" fill="rgb(54, 17, 240)"/><polygon points="2170.80,341.82 2176.80,340.01 2184.60,367.94 2179.76,369.40" fill="rgb(62, 18, 240)"/><polygon points="2175.79,340.29 2181.85,338.69 2188.67,366.88 2183.79,368.17" fill="rgb(70, 20, 240)"/><polygon points="2180.83,338.94 2186.94,337.55 2192.77,365.96 2187.85,367.08" fill="rgb(79, 21, 240)"/><polygon points="2185.92,337.77 2192.07,336.59 2196.90,365.19 2191.95,366.13" fill="rgb(88, 22, 240)"/><polygon points="2191.04,336.77 2197.23,335.81 2201.06,364.56 2196.08,365.33" fill="rgb(97, 24, 240)"/><polygon points="2196.19,335.95 2202.41,335.21 2205.24,364.08 2200.23,364.67" fill="rgb(106, 25, 240)"/><polygon points="2201.37,335.32 2207.61,334.80 2209.43,363.74 2204.40,364.16" fill="rgb(115, 27, 240)"/><polygon points="2206.57,334.86 2212.83,334.56 2213.64,363.55 2208.59,363.79" fill="rgb(124, 28, 240)"/><polygon points="2211.78,334.59 2218.04,334.50 2217.84,363.50 2212.79,363.57" fill="rgb(133, 30, 240)"/><polygon points="2158,381 2158,581 2336,483" fill="url(#triBW)"/><polygon points="2158,381 2158,581 2336,483" fill="url(#triR)"/><circle cx="2350.7" cy="483" r="11" fill="#e8352a" stroke="#fff" stroke-width="3.2"/><circle cx="2156" cy="586.6" r="11" fill="#fff" stroke="#555" stroke-width="1"/><circle cx="2156" cy="586.6" r="9" fill="#fff" stroke="#333" stroke-width="1"/><circle cx="1999" cy="700" r="12" fill="#fff" stroke="#2a2a2a" stroke-width="2"/><g clip-path="url(#tclip)"><rect x="2025" y="692" width="297" height="19" fill="url(#chk)"/><rect x="2025" y="692" width="297" height="19" fill="url(#opg)"/></g><circle cx="2316.5" cy="700.7" r="10.5" fill="#3a3a3a" stroke="#fff" stroke-width="3.2"/><polyline points="2435.0,694.0 2441.5,702.0 2448.0,694.0" fill="none" stroke="#e0e0e0" stroke-width="2.2"/><polyline points="2131.3,816.5 2137.3,824.5 2143.3,816.5" fill="none" stroke="#e0e0e0" stroke-width="2.2"/><polyline points="2364.5,816.5 2371,824.5 2377.5,816.5" fill="none" stroke="#e0e0e0" stroke-width="2.2"/><polygon points="2423.10,821.00 2422.88,823.24 2419.46,824.26 2418.68,825.73 2419.73,829.13 2417.99,830.56 2414.86,828.86 2413.26,829.35 2411.60,832.50 2409.36,832.28 2408.34,828.86 2406.87,828.08 2403.47,829.13 2402.04,827.39 2403.74,824.26 2403.25,822.66 2400.10,821.00 2400.32,818.76 2403.74,817.74 2404.52,816.27 2403.47,812.87 2405.21,811.44 2408.34,813.14 2409.94,812.65 2411.60,809.50 2413.84,809.72 2414.86,813.14 2416.33,813.92 2419.73,812.87 2421.16,814.61 2419.46,817.74 2419.95,819.34" fill="#a6a6a6" transform="rotate(11 2411.6 821)"/><circle cx="2411.6" cy="821" r="4.37" fill="#353535"/><rect x="2449" y="817" width="13.5" height="13.5" rx="1.5" fill="#a6a6a6"/><path d="M2451.5,817 v-3.5 a4.3,4.3 0 0 1 8.6,0 v1" fill="none" stroke="#a6a6a6" stroke-width="2.2"/><circle cx="2417.7" cy="889" r="9" fill="#9c9c9c"/><circle cx="2417.7" cy="963" r="9" fill="#9c9c9c"/><circle cx="2417.7" cy="1037" r="9" fill="#9c9c9c"/><rect x="2372" y="1034" width="16" height="15" rx="2" fill="#9c9c9c"/><path d="M2375,1034 v-4 a5,5 0 0 1 10,0 v1" fill="none" stroke="#9c9c9c" stroke-width="2.4"/><rect x="1997.5" y="867.5" width="42" height="42" rx="2" fill="none" stroke="#d2d2d2" stroke-width="2.6"/><path d="M2001,905 C2006,890 2012,884 2017,888 C2022,892 2026,894 2030,886 C2033,880 2035,874 2036,871" fill="none" stroke="#d2d2d2" stroke-width="2.4"/><path d="M1994,965 L2002,940 L2009,957 L2017,952 L2022,955 L2030,950 L2038,963 L2043,970 L2030,962 L2017,966 L2008,962 L1996,969 Z" fill="#d2d2d2"/><path d="M1994,973 L2004,966 L2015,972 L2027,966 L2035,971 L2043,976 L2043,980 L2030,973 L2017,978 L2004,973 L1994,980 Z" fill="#d2d2d2"/><path d="M1995,978 v7 h48 v-7 M2007,981 v4 M2019,981 v4 M2031,981 v4" fill="none" stroke="#d2d2d2" stroke-width="2.4"/><rect x="2156" y="1222" width="29" height="25" rx="2" fill="#a3a3a3"/><circle cx="2170.5" cy="1234.5" r="7.5" fill="#353535"/><circle cx="2210" cy="1235" r="13.2" fill="none" stroke="#a3a3a3" stroke-width="2"/><path d="M2217,1228 A9.9,9.9 0 0 1 2203,1242 Z" fill="#a3a3a3"/><rect x="2239.5" y="1220.5" width="21.5" height="2.2" fill="#a3a3a3"/><rect x="2239.5" y="1247.5" width="21.5" height="2.2" fill="#a3a3a3"/><path d="M2239.5,1226.5 h9 v3.2 h-5.5 v3 h4.5 v3 h-4.5 v8.3 h-3.5 z" fill="#a3a3a3"/><path d="M2247,1226.5 h4 l3.5,6 l3.5,-6 h4 l-5.5,8.7 l6,8.8 h-4 l-4,-6.3 l-4,6.3 h-4 l6,-8.8 z" fill="#a3a3a3"/><path d="M2280,1224 h18 l-7,11 l7,11 h-18 l7,-11 z" fill="#a3a3a3"/><path d="M2364,1224 h9 l3,3 h16 v20 h-28 z" fill="#a3a3a3"/><rect x="2408" y="1221" width="20" height="28" rx="2" fill="none" stroke="#a3a3a3" stroke-width="2"/><g fill="#a3a3a3"><rect x="2413" y="1226" width="3.5" height="3.5"/><rect x="2419.5" y="1226" width="3.5" height="3.5"/><rect x="2416.3" y="1229.5" width="3.2" height="4.5"/><rect x="2413" y="1233.8" width="3.5" height="3.5"/><rect x="2419.5" y="1233.8" width="3.5" height="3.5"/><rect x="2416.3" y="1237.3" width="3.2" height="3.5"/><rect x="2413" y="1240.5" width="3.5" height="3.5"/><rect x="2419.5" y="1240.5" width="3.5" height="3.5"/></g><path d="M2449,1226 h19 M2453,1226 v-3 h11 v3 M2450,1228 l2,20 h13 l2,-20 M2455,1231 v14 M2459,1231 v14 M2463,1231 v14" fill="none" stroke="#a3a3a3" stroke-width="2"/><rect x="1993" y="1357" width="10" height="3" fill="#fff"/><rect x="2020" y="1346" width="293" height="10" rx="5" fill="#1f1f1f"/><rect x="2020" y="1346" width="240" height="10" rx="5" fill="#5b7ea8"/><path d="M2251,1343 h12 v13 l-6,5 l-6,-5 z" fill="#dedede"/><rect x="2024.8" y="1371" width="2" height="6" fill="#a8a8a8"/><rect x="2039.9" y="1371" width="2" height="6" fill="#a8a8a8"/><rect x="2074.0" y="1371" width="2" height="6" fill="#a8a8a8"/><rect x="2119.7" y="1371" width="2" height="6" fill="#a8a8a8"/><rect x="2136.0" y="1371" width="2" height="6" fill="#a8a8a8"/><rect x="2166.7" y="1371" width="2" height="6" fill="#a8a8a8"/><rect x="2196.7" y="1371" width="2" height="6" fill="#a8a8a8"/><rect x="2240.0" y="1371" width="2" height="6" fill="#a8a8a8"/><rect x="2256.0" y="1371" width="2" height="6" fill="#a8a8a8"/><rect x="2274.0" y="1371" width="2" height="6" fill="#a8a8a8"/><rect x="2304.7" y="1371" width="2" height="6" fill="#a8a8a8"/><rect x="2332" y="1357.5" width="20" height="2.6" fill="#fff"/><rect x="2340.7" y="1349" width="2.6" height="20" fill="#fff"/></svg>
<svg class="r" style="left:1985px;top:1004px;opacity:0.9" width="65" height="65" viewBox="96 340 1006 1006"><path d="M485,822.7 C483,792 494,762 520,745 C535,737 553,735 572,745 C585,752 597,766 603.4,778.7 L598,788 L607,793.4 L620,806 L632.7,831.9 C640,810 654,782 677,759 C695,741 714,729 733,726.4 C746,725 758,734 767.7,744 L746,759 L774,752.8 L775.5,758.5 L764,769.8 L779.8,767 L777,777 L762.7,791 L782.6,785.5 C786,792 789,800 789.8,810 C790,828 783,843 771,851 L772.7,854.6 C765,872 751,896 736,921 C720,946 700,975 678,1002 L636,1042 L600,1008 L572.2,984 L559.4,969.4 L553.9,963.9 L542.9,956.6 L539.2,949.2 L524.5,929 L513.5,914.4 L511.7,908.9 L502.5,896 C497,884 494,876 493.3,870.4 L490.6,859.4 L487.8,848.4 C486,838 485,830 485,822.7 Z" fill="#937878"/>
<g stroke="#e9e5e2" stroke-linecap="round"><line x1="579" y1="804" x2="603" y2="787" stroke-width="5.28"/><line x1="718" y1="812" x2="762" y2="791" stroke-width="4.40"/><line x1="727" y1="874" x2="772" y2="855" stroke-width="5.72"/></g>
<path d="M481.8,697.8 A235,235 0 0 1 832.0,996.9" fill="none" stroke="#111" stroke-width="5.72"/>
<path d="M710.7,1102.4 A235,235 0 0 1 391.8,870.7" fill="none" stroke="#111" stroke-width="5.72"/>
<circle cx="821" cy="1013.5" r="8.0" fill="#111"/>
<circle cx="795.5" cy="1045.8" r="8.0" fill="#111"/>
<circle cx="764" cy="1073" r="8.0" fill="#111"/>
<circle cx="728.6" cy="1093.3" r="8.0" fill="#111"/>
<g fill="none" stroke="#111" stroke-width="6.16" stroke-linejoin="round">
<path d="M392,880 C394,850 405,800 418,771 C435,735 455,715 473,703 C500,680 540,640 561,614"/>
<path d="M392,868 Q393.6,812.4 366,764 Q364.4,819.6 392,868 Z"/>
<path d="M396,855 Q435.4,817.5 453,766 Q413.6,803.5 396,855 Z"/>
<path d="M400,832 Q420.4,771.1 417,707 Q396.6,767.9 400,832 Z"/>
<path d="M424,768 Q469.5,755.4 503,722 Q457.5,734.6 424,768 Z"/>
<path d="M428,760 Q453.7,705.9 456,646 Q430.3,700.1 428,760 Z"/>
<path d="M468,712 Q528.2,710.8 584,688 Q523.8,689.2 468,712 Z"/>
<path d="M476,700 Q527.7,666.1 561,614 Q509.3,647.9 476,700 Z"/>
</g>
<g fill="none" stroke="#2b2424" stroke-width="8.80" stroke-linecap="round" stroke-linejoin="round">
<path d="M585,731 L493.5,855" stroke-width="9.46"/>
<path d="M477,846.5 L612.5,845.6" stroke-width="10.12"/><path d="M571,851 L603,848.4" stroke-width="6.60"/>
<path d="M583.5,788 C574,800 565,814 562,822 C561,829 574,823 592,808" stroke-width="7.70"/><path d="M604,764 L591,775" stroke-width="9.90"/>
<path d="M647,755 L596,826 C601,829 611,819 621,808" stroke-width="8.36"/><path d="M607,787 L634,787" stroke-width="9.24"/>
<path d="M691,755 L639,826 C644,829 655,819 665,808" stroke-width="8.36"/><path d="M650,787 L678,787" stroke-width="9.24"/>
<path d="M749,735 C735,760 700,800 684,826 C688,829 700,818 710,805" stroke-width="13.20"/>
<path d="M726,812 C740,800 758,790 760,786 C762,781 750,783 740,792 C728,802 724,822 732,825 C745,826 760,812 767,800" stroke-width="8.80"/>
<path d="M528,912 C545,900 552,885 548,876 C540,866 510,872 485,890 C450,915 425,950 432,978 C438,996 470,990 500,972 C520,960 535,950 546,940" stroke-width="7.92"/>
<path d="M548,928 C530,950 505,980 487,1002" stroke-width="11.00"/><path d="M487,1002 C500,995 512,986 520,978" stroke-width="6.60"/>
<path d="M497,945.6 L554,940" stroke-width="11.00"/>
<path d="M595,925 L567,968 M588,929 C595,924 603,921 610,923 C614,926 614,935 619,939" stroke-width="10.12"/>
<path d="M651,927 C636,934 622,950 621,960 C622,968 640,955 655,930 L641,968 C646,965 660,955 668,946" stroke-width="9.68"/>
<path d="M705,924 L678,969 M690,945 C697,932 706,925 709,930 L704,966 M712,945 C720,932 728,925 731,930 L716,963 C722,960 736,950 745,940" stroke-width="10.12"/>
<path d="M793,921 C782,935 762,950 760,962 C761,972 782,963 791,950 C796,940 792,934 786,940 M766,950 L802,941" stroke-width="8.80"/>
</g></svg>
<svg class="r" style="left:2191px;top:1401px;opacity:0.9" width="51" height="51" viewBox="96 340 1006 1006"><path d="M485,822.7 C483,792 494,762 520,745 C535,737 553,735 572,745 C585,752 597,766 603.4,778.7 L598,788 L607,793.4 L620,806 L632.7,831.9 C640,810 654,782 677,759 C695,741 714,729 733,726.4 C746,725 758,734 767.7,744 L746,759 L774,752.8 L775.5,758.5 L764,769.8 L779.8,767 L777,777 L762.7,791 L782.6,785.5 C786,792 789,800 789.8,810 C790,828 783,843 771,851 L772.7,854.6 C765,872 751,896 736,921 C720,946 700,975 678,1002 L636,1042 L600,1008 L572.2,984 L559.4,969.4 L553.9,963.9 L542.9,956.6 L539.2,949.2 L524.5,929 L513.5,914.4 L511.7,908.9 L502.5,896 C497,884 494,876 493.3,870.4 L490.6,859.4 L487.8,848.4 C486,838 485,830 485,822.7 Z" fill="#937878"/>
<g stroke="#e9e5e2" stroke-linecap="round"><line x1="579" y1="804" x2="603" y2="787" stroke-width="5.28"/><line x1="718" y1="812" x2="762" y2="791" stroke-width="4.40"/><line x1="727" y1="874" x2="772" y2="855" stroke-width="5.72"/></g>
<path d="M481.8,697.8 A235,235 0 0 1 832.0,996.9" fill="none" stroke="#111" stroke-width="5.72"/>
<path d="M710.7,1102.4 A235,235 0 0 1 391.8,870.7" fill="none" stroke="#111" stroke-width="5.72"/>
<circle cx="821" cy="1013.5" r="8.0" fill="#111"/>
<circle cx="795.5" cy="1045.8" r="8.0" fill="#111"/>
<circle cx="764" cy="1073" r="8.0" fill="#111"/>
<circle cx="728.6" cy="1093.3" r="8.0" fill="#111"/>
<g fill="none" stroke="#111" stroke-width="6.16" stroke-linejoin="round">
<path d="M392,880 C394,850 405,800 418,771 C435,735 455,715 473,703 C500,680 540,640 561,614"/>
<path d="M392,868 Q393.6,812.4 366,764 Q364.4,819.6 392,868 Z"/>
<path d="M396,855 Q435.4,817.5 453,766 Q413.6,803.5 396,855 Z"/>
<path d="M400,832 Q420.4,771.1 417,707 Q396.6,767.9 400,832 Z"/>
<path d="M424,768 Q469.5,755.4 503,722 Q457.5,734.6 424,768 Z"/>
<path d="M428,760 Q453.7,705.9 456,646 Q430.3,700.1 428,760 Z"/>
<path d="M468,712 Q528.2,710.8 584,688 Q523.8,689.2 468,712 Z"/>
<path d="M476,700 Q527.7,666.1 561,614 Q509.3,647.9 476,700 Z"/>
</g>
<g fill="none" stroke="#2b2424" stroke-width="8.80" stroke-linecap="round" stroke-linejoin="round">
<path d="M585,731 L493.5,855" stroke-width="9.46"/>
<path d="M477,846.5 L612.5,845.6" stroke-width="10.12"/><path d="M571,851 L603,848.4" stroke-width="6.60"/>
<path d="M583.5,788 C574,800 565,814 562,822 C561,829 574,823 592,808" stroke-width="7.70"/><path d="M604,764 L591,775" stroke-width="9.90"/>
<path d="M647,755 L596,826 C601,829 611,819 621,808" stroke-width="8.36"/><path d="M607,787 L634,787" stroke-width="9.24"/>
<path d="M691,755 L639,826 C644,829 655,819 665,808" stroke-width="8.36"/><path d="M650,787 L678,787" stroke-width="9.24"/>
<path d="M749,735 C735,760 700,800 684,826 C688,829 700,818 710,805" stroke-width="13.20"/>
<path d="M726,812 C740,800 758,790 760,786 C762,781 750,783 740,792 C728,802 724,822 732,825 C745,826 760,812 767,800" stroke-width="8.80"/>
<path d="M528,912 C545,900 552,885 548,876 C540,866 510,872 485,890 C450,915 425,950 432,978 C438,996 470,990 500,972 C520,960 535,950 546,940" stroke-width="7.92"/>
<path d="M548,928 C530,950 505,980 487,1002" stroke-width="11.00"/><path d="M487,1002 C500,995 512,986 520,978" stroke-width="6.60"/>
<path d="M497,945.6 L554,940" stroke-width="11.00"/>
<path d="M595,925 L567,968 M588,929 C595,924 603,921 610,923 C614,926 614,935 619,939" stroke-width="10.12"/>
<path d="M651,927 C636,934 622,950 621,960 C622,968 640,955 655,930 L641,968 C646,965 660,955 668,946" stroke-width="9.68"/>
<path d="M705,924 L678,969 M690,945 C697,932 706,925 709,930 L704,966 M712,945 C720,932 728,925 731,930 L716,963 C722,960 736,950 745,940" stroke-width="10.12"/>
<path d="M793,921 C782,935 762,950 760,962 C761,972 782,963 791,950 C796,940 792,934 786,940 M766,950 L802,941" stroke-width="8.80"/>
</g></svg>
<div class="tx" style="left:-10.50px;top:11.20px;font-size:24px;line-height:27px;color:#ffffff;transform:scaleX(1.0472)">Document</div>
<div class="tx" style="left:156.06px;top:11.20px;font-size:24px;line-height:27px;color:#ffffff;transform:scaleX(0.9366)">Layer</div>
<div class="tx" style="left:263.56px;top:11.20px;font-size:24px;line-height:27px;color:#ffffff;transform:scaleX(0.9419)">Select</div>
<div class="tx" style="left:378.90px;top:11.20px;font-size:24px;line-height:27px;color:#ffffff;transform:scaleX(0.9961)">Arrange</div>
<div class="tx" style="left:515.74px;top:11.20px;font-size:24px;line-height:27px;color:#ffffff;transform:scaleX(0.9560)">Filters</div>
<div class="tx" style="left:630.80px;top:11.20px;font-size:24px;line-height:27px;color:#ffffff;transform:scaleX(0.9798)">View</div>
<div class="tx" style="left:734.20px;top:11.20px;font-size:24px;line-height:27px;color:#ffffff;transform:scaleX(1.0113)">Window</div>
<div class="tx" style="left:872.38px;top:11.20px;font-size:24px;line-height:27px;color:#ffffff;transform:scaleX(1.0185)">Help</div>
<div class="tx" style="left:-68.85px;top:161.80px;font-size:24px;line-height:27px;color:#e4e4e4;transform:scaleX(0.9202)">RGBA/8 - sRGB IEC61966-2.1</div>
<div class="tx" style="left:269.64px;top:161.80px;font-size:24px;line-height:27px;color:#e4e4e4;transform:scaleX(0.9620)">No Camera Data</div>
<div class="tx" style="left:478.01px;top:161.80px;font-size:24px;line-height:27px;color:#e4e4e4;transform:scaleX(0.9884)">Units:</div>
<div class="tx" style="left:563.17px;top:161.80px;font-size:24px;line-height:27px;color:#ffffff;transform:scaleX(0.8251)">Pixels</div>
<div class="tx" style="left:-84.71px;top:219.00px;font-size:24px;line-height:27px;color:#e4e4e4;transform:scaleX(0.8524)">Untitled (201.6%)</div>
<div class="tx" style="left:1992.48px;top:219.10px;font-size:24px;line-height:27px;color:#bcbcbc;transform:scaleX(0.9221)">Histogram</div>
<div class="tx" style="left:2112.38px;top:219.10px;font-size:24px;line-height:27px;color:#e4e4e4;transform:scaleX(0.9191)">Color</div>
<div class="tx" style="left:1992.00px;top:562.80px;font-size:23px;line-height:26px;color:#a9a9a9;transform:scaleX(0.7833)">0</div>
<div class="tx" style="left:1992.00px;top:589.00px;font-size:23px;line-height:26px;color:#a9a9a9;transform:scaleX(0.7833)">0</div>
<div class="tx" style="left:1991.16px;top:616.00px;font-size:23px;line-height:26px;color:#a9a9a9;transform:scaleX(0.8419)">100</div>
<div class="tx" style="left:1972.24px;top:652.00px;font-size:23px;line-height:26px;color:#a9a9a9;transform:scaleX(0.8800)">Opacity</div>
<div class="tx" style="left:2346.40px;top:612.70px;font-size:23px;line-height:26px;color:#a9a9a9;transform:scaleX(0.8768)">#:</div>
<div class="tx" style="left:2369.84px;top:612.70px;font-size:23px;line-height:26px;color:#ffffff;transform:scaleX(0.7616)">FFFFFF</div>
<div class="tx" style="left:2351.11px;top:686.80px;font-size:23px;line-height:26px;color:#ffffff;transform:scaleX(0.8939)">100 %</div>
<div class="tx" style="left:1992.37px;top:749.20px;font-size:24px;line-height:27px;color:#e4e4e4;transform:scaleX(0.8278)">Layers</div>
<div class="tx" style="left:2072.81px;top:749.20px;font-size:24px;line-height:27px;color:#bcbcbc;transform:scaleX(0.8877)">Chn</div>
<div class="tx" style="left:2132.15px;top:749.20px;font-size:24px;line-height:27px;color:#bcbcbc;transform:scaleX(0.8479)">Brushes</div>
<div class="tx" style="left:2226.74px;top:749.20px;font-size:24px;line-height:27px;color:#bcbcbc;transform:scaleX(0.8630)">Stock</div>
<div class="tx" style="left:2299.26px;top:749.20px;font-size:24px;line-height:27px;color:#bcbcbc;transform:scaleX(0.7417)">FX</div>
<div class="tx" style="left:1957.00px;top:807.00px;font-size:24px;line-height:27px;color:#a9a9a9;transform:scaleX(0.8800)">Opacity:</div>
<div class="tx" style="left:2054.64px;top:807.00px;font-size:24px;line-height:27px;color:#ffffff;transform:scaleX(0.8619)">100 %</div>
<div class="tx" style="left:2170.07px;top:807.00px;font-size:24px;line-height:27px;color:#ffffff;transform:scaleX(0.9332)">Normal</div>
<div class="tx" style="left:2061.42px;top:876.90px;font-size:24px;line-height:27px;color:#e4e4e4;transform:scaleX(0.9848)">Curves Adjustment</div>
<div class="tx" style="left:2061.42px;top:950.50px;font-size:24px;line-height:27px;color:#e4e4e4;transform:scaleX(0.9824)">Levels Adjustment</div>
<div class="tx" style="left:2061.41px;top:1024.60px;font-size:24px;line-height:27px;color:#e4e4e4;transform:scaleX(0.9933)">Background</div>
<div class="tx" style="left:1991.77px;top:1277.90px;font-size:24px;line-height:27px;color:#e4e4e4;transform:scaleX(0.9349)">Navigator</div>
<div class="tx" style="left:2108.50px;top:1277.90px;font-size:24px;line-height:27px;color:#bcbcbc;transform:scaleX(0.8887)">Transform</div>
<div class="tx" style="left:2225.09px;top:1277.90px;font-size:24px;line-height:27px;color:#bcbcbc;transform:scaleX(0.9135)">History</div>
<div class="tx" style="left:2312.47px;top:1277.90px;font-size:24px;line-height:27px;color:#bcbcbc;transform:scaleX(0.9659)">Info</div>
<div class="tx" style="left:2378.14px;top:1346.40px;font-size:24px;line-height:27px;color:#ffffff;transform:scaleX(0.8619)">202 %</div>
<div class="r" style="left:1132px;top:348px;width:860px;height:1044px;background:#272727;"></div>
<div class="r" style="left:1134px;top:350px;width:856px;height:44px;background:#3a3a3a;"></div>
<div class="r" style="left:1134px;top:394px;width:856px;height:60px;background:#494949;"></div>
<div class="r" style="left:1134px;top:454px;width:856px;height:2px;background:#2a2a2a;"></div>
<div class="r" style="left:1134px;top:456px;width:856px;height:872px;background:#3e3e3e;"></div>
<div class="r" style="left:1134px;top:1328px;width:856px;height:2px;background:#2a2a2a;"></div>
<div class="r" style="left:1134px;top:1330px;width:856px;height:60px;background:#4a4a4a;"></div>
<div class="r" style="left:1150px;top:404px;width:136px;height:40px;background:#454545;border-radius:6px;"></div>
<div class="r" style="left:1688px;top:404px;width:88px;height:40px;background:#454545;border-radius:6px;"></div>
<div class="r" style="left:1793px;top:404px;width:87px;height:40px;background:#454545;border-radius:6px;"></div>
<div class="r" style="left:1897px;top:404px;width:76px;height:40px;background:#454545;border-radius:6px;"></div>
<div class="r" style="left:1160px;top:1198px;width:146px;height:36px;background:#474747;border-radius:5px;"></div>
<div class="r" style="left:1318px;top:1198px;width:551px;height:36px;background:#474747;border-radius:5px;"></div>
<div class="r" style="left:1883px;top:1196px;width:83px;height:40px;background:#474747;border-radius:6px;"></div>
<div class="r" style="left:1180px;top:1248px;width:110px;height:39px;background:#1f1f1f;border-radius:6px;"></div>
<div class="r" style="left:1315px;top:1248px;width:110px;height:39px;background:#1f1f1f;border-radius:6px;"></div>
<div class="r" style="left:1688px;top:1248px;width:110px;height:40px;background:#1f1f1f;border-radius:6px;"></div>
<div class="r" style="left:1852px;top:1248px;width:110px;height:40px;background:#1f1f1f;border-radius:6px;"></div>
<div class="r" style="left:1229px;top:1340px;width:120px;height:39px;background:#1f1f1f;border-radius:6px;"></div>
<div class="r" style="left:1678px;top:1343px;width:260px;height:34px;background:#474747;border-radius:5px;"></div>
<div class="r" style="left:1165px;top:491px;width:793px;height:685px;background:#8c8c8c;"></div>
<div class="r" style="left:1167px;top:493px;width:789px;height:681px;background:#1a1a1a;"></div>
<svg class="r" style="left:0;top:0" width="2483" height="1473" viewBox="0 0 2483 1473"><rect x="1365" y="493" width="2" height="681" fill="#464646"/><rect x="1761" y="493" width="2" height="681" fill="#464646"/><rect x="1167" y="664" width="789" height="2" fill="#464646"/><rect x="1167" y="1005.5" width="789" height="2" fill="#464646"/><rect x="1563" y="493" width="2" height="681" fill="#8c8c8c"/><rect x="1167" y="835" width="789" height="2" fill="#8c8c8c"/><rect x="1530" y="493" width="6" height="681" fill="#0a2a8a"/><rect x="1530" y="493" width="1.5" height="681" fill="#1010ff"/><rect x="1534.5" y="493" width="1.5" height="681" fill="#1010ff"/><rect x="1535.5" y="493" width="4.0" height="681" fill="#10a010"/><rect x="1535.5" y="493" width="1.5" height="681" fill="#10e010"/><rect x="1538.0" y="493" width="1.5" height="681" fill="#10e010"/><rect x="1635" y="493" width="6.5" height="681" fill="#8c1010"/><rect x="1635" y="493" width="1.5" height="681" fill="#c80808"/><rect x="1640.0" y="493" width="1.5" height="681" fill="#c80808"/><rect x="1870" y="493" width="7" height="681" fill="#0a0a90"/><rect x="1870" y="493" width="1.5" height="681" fill="#1010ff"/><rect x="1875.5" y="493" width="1.5" height="681" fill="#1010ff"/><rect x="1877" y="493" width="6" height="681" fill="#109a10"/><rect x="1877" y="493" width="1.5" height="681" fill="#10e010"/><rect x="1881.5" y="493" width="1.5" height="681" fill="#10e010"/><rect x="1891" y="493" width="8" height="681" fill="#901010"/><rect x="1891" y="493" width="1.5" height="681" fill="#c80808"/><rect x="1897.5" y="493" width="1.5" height="681" fill="#c80808"/><polygon points="1281,1174 1283.5,1060 1285,911 1286.5,1060 1290,1150 1296,1160 1300,1174" fill="#0b4a9a" stroke="#1a3aff" stroke-width="1.2"/><polygon points="1313,1174 1314.5,1060 1316,912 1317.5,1060 1319,1162 1326,1164 1330,1174" fill="#9a1010" stroke="#ff1a1a" stroke-width="1.2"/><polygon points="1167,1174 1167.5,987 1169,1150 1171,1174" fill="#0b4a9a" stroke="#1a3aff" stroke-width="1"/><polygon points="1207.5,1174 1211,1156 1214.5,1174" fill="rgba(16,160,16,0.5)" stroke="#10e010" stroke-width="1.3"/><polygon points="1210.5,1174 1214,1164 1217.5,1174" fill="rgba(16,60,160,0.5)" stroke="#1a3aff" stroke-width="1.3"/><polygon points="1212.5,1174 1216,1162 1219.5,1174" fill="rgba(160,16,16,0.5)" stroke="#e01010" stroke-width="1.3"/><polygon points="1253.5,1174 1257,1166 1260.5,1174" fill="rgba(160,16,16,0.5)" stroke="#e01010" stroke-width="1.3"/><polygon points="1254.5,1174 1258,1168 1261.5,1174" fill="rgba(16,60,160,0.5)" stroke="#1a3aff" stroke-width="1.3"/><polygon points="1286.5,1174 1290,1160 1293.5,1174" fill="rgba(16,160,16,0.5)" stroke="#10e010" stroke-width="1.3"/><polygon points="1296.5,1174 1300,1166 1303.5,1174" fill="rgba(16,60,160,0.5)" stroke="#1a3aff" stroke-width="1.3"/><polygon points="1344.5,1174 1348,1162 1351.5,1174" fill="rgba(160,16,16,0.5)" stroke="#e01010" stroke-width="1.3"/><polygon points="1341.5,1174 1345,1164 1348.5,1174" fill="rgba(16,160,16,0.5)" stroke="#10e010" stroke-width="1.3"/><polygon points="1338.5,1174 1342,1166 1345.5,1174" fill="rgba(16,60,160,0.5)" stroke="#1a3aff" stroke-width="1.3"/><polygon points="1337.5,1174 1341,1162 1344.5,1174" fill="rgba(16,60,160,0.5)" stroke="#1a3aff" stroke-width="1.3"/><polygon points="1346.5,1174 1350,1166 1353.5,1174" fill="rgba(16,160,16,0.5)" stroke="#10e010" stroke-width="1.3"/><polygon points="1436.5,1174 1440,1168 1443.5,1174" fill="rgba(16,160,16,0.5)" stroke="#10e010" stroke-width="1.3"/><polygon points="1456.5,1174 1460,1169 1463.5,1174" fill="rgba(160,16,16,0.5)" stroke="#e01010" stroke-width="1.3"/><polygon points="1476.5,1174 1480,1168 1483.5,1174" fill="rgba(16,60,160,0.5)" stroke="#1a3aff" stroke-width="1.3"/><polygon points="1516.5,1174 1520,1164 1523.5,1174" fill="rgba(16,60,160,0.5)" stroke="#1a3aff" stroke-width="1.3"/><polygon points="1520.5,1174 1524,1160 1527.5,1174" fill="rgba(16,160,16,0.5)" stroke="#10e010" stroke-width="1.3"/><polygon points="1522.5,1174 1526,1166 1529.5,1174" fill="rgba(160,16,16,0.5)" stroke="#e01010" stroke-width="1.3"/><polygon points="1569.5,1174 1573,1168 1576.5,1174" fill="rgba(16,60,160,0.5)" stroke="#1a3aff" stroke-width="1.3"/><polygon points="1575.5,1174 1579,1169 1582.5,1174" fill="rgba(16,160,16,0.5)" stroke="#10e010" stroke-width="1.3"/><polygon points="1582.5,1174 1586,1168 1589.5,1174" fill="rgba(160,16,16,0.5)" stroke="#e01010" stroke-width="1.3"/><polygon points="1613.5,1174 1617,1162 1620.5,1174" fill="rgba(16,60,160,0.5)" stroke="#1a3aff" stroke-width="1.3"/><polygon points="1618.5,1174 1622,1162 1625.5,1174" fill="rgba(16,160,16,0.5)" stroke="#10e010" stroke-width="1.3"/><polygon points="1628.5,1174 1632,1162 1635.5,1174" fill="rgba(160,16,16,0.5)" stroke="#e01010" stroke-width="1.3"/><polygon points="1660.5,1174 1664,1169 1667.5,1174" fill="rgba(16,60,160,0.5)" stroke="#1a3aff" stroke-width="1.3"/><polygon points="1668.5,1174 1672,1169 1675.5,1174" fill="rgba(16,160,16,0.5)" stroke="#10e010" stroke-width="1.3"/><polygon points="1699.5,1174 1703,1162 1706.5,1174" fill="rgba(16,60,160,0.5)" stroke="#1a3aff" stroke-width="1.3"/><polygon points="1703.5,1174 1707,1162 1710.5,1174" fill="rgba(16,160,16,0.5)" stroke="#10e010" stroke-width="1.3"/><polygon points="1710.5,1174 1714,1162 1717.5,1174" fill="rgba(160,16,16,0.5)" stroke="#e01010" stroke-width="1.3"/><polygon points="1734.5,1174 1738,1164 1741.5,1174" fill="rgba(16,60,160,0.5)" stroke="#1a3aff" stroke-width="1.3"/><polygon points="1746.5,1174 1750,1162 1753.5,1174" fill="rgba(16,160,16,0.5)" stroke="#10e010" stroke-width="1.3"/><polygon points="1759.5,1174 1763,1160 1766.5,1174" fill="rgba(160,16,16,0.5)" stroke="#e01010" stroke-width="1.3"/><polygon points="1780.5,1174 1784,1164 1787.5,1174" fill="rgba(16,60,160,0.5)" stroke="#1a3aff" stroke-width="1.3"/><polygon points="1786.5,1174 1790,1162 1793.5,1174" fill="rgba(16,160,16,0.5)" stroke="#10e010" stroke-width="1.3"/><polygon points="1800.5,1174 1804,1162 1807.5,1174" fill="rgba(160,16,16,0.5)" stroke="#e01010" stroke-width="1.3"/><polygon points="1826.5,1174 1830,1158 1833.5,1174" fill="rgba(16,60,160,0.5)" stroke="#1a3aff" stroke-width="1.3"/><polygon points="1833.5,1174 1837,1152 1840.5,1174" fill="rgba(16,160,16,0.5)" stroke="#10e010" stroke-width="1.3"/><polygon points="1844.5,1174 1848,1158 1851.5,1174" fill="rgba(160,16,16,0.5)" stroke="#e01010" stroke-width="1.3"/><polygon points="1856.5,1174 1860,1168 1863.5,1174" fill="rgba(16,160,16,0.5)" stroke="#10e010" stroke-width="1.3"/><polygon points="1901.5,1174 1905,1170 1908.5,1174" fill="rgba(160,16,16,0.5)" stroke="#e01010" stroke-width="1.3"/><polygon points="1908.5,1174 1912,1169 1915.5,1174" fill="rgba(16,60,160,0.5)" stroke="#1a3aff" stroke-width="1.3"/><polyline points="1290,1172.2 1296,1172.6 1302,1171.4 1308,1172.8 1314,1171.7 1320,1172.1 1326,1172.9 1332,1171.7 1338,1172.9 1344,1171.9 1350,1172.8 1356,1172.8 1362,1171.9 1368,1170.9 1374,1172.7 1380,1172.4 1386,1171.4 1392,1170.6 1398,1171.6 1404,1172.0 1410,1170.6 1416,1172.9 1422,1170.9 1428,1172.3 1434,1172.6 1440,1172.7 1446,1172.2 1452,1171.0 1458,1172.5 1464,1171.5 1470,1171.4 1476,1172.1 1482,1171.6 1488,1172.8 1494,1172.9 1500,1172.5 1506,1171.3 1512,1171.9 1518,1172.2 1524,1171.5 1530,1171.9 1536,1172.3 1542,1171.0 1548,1171.3 1554,1172.4 1560,1171.6 1566,1171.7 1572,1170.8 1578,1171.2 1584,1172.3 1590,1170.5 1596,1172.7 1602,1172.0 1608,1171.1 1614,1172.6 1620,1171.8 1626,1172.9 1632,1171.3 1638,1171.1 1644,1171.6 1650,1170.8 1656,1172.2 1662,1171.3 1668,1171.5 1674,1171.6 1680,1171.9 1686,1170.9 1692,1170.6 1698,1171.8 1704,1171.3 1710,1172.8 1716,1171.2 1722,1171.4 1728,1170.5 1734,1170.9 1740,1172.3 1746,1172.0 1752,1171.3 1758,1172.9 1764,1171.8 1770,1172.6 1776,1172.7 1782,1172.9 1788,1171.1 1794,1172.7 1800,1172.4 1806,1172.0 1812,1170.8 1818,1172.8 1824,1171.9 1830,1171.6 1836,1170.8 1842,1171.0 1848,1170.8 1854,1172.3 1860,1172.0 1866,1172.1 1872,1170.8 1878,1170.6 1884,1172.6 1890,1172.6 1896,1172.4" fill="none" stroke="#10e010" stroke-width="1"/><polyline points="1290,1172.4 1296,1171.8 1302,1171.5 1308,1172.3 1314,1173.0 1320,1172.0 1326,1172.1 1332,1171.6 1338,1170.6 1344,1171.3 1350,1171.7 1356,1171.5 1362,1171.3 1368,1172.9 1374,1170.8 1380,1171.1 1386,1170.8 1392,1171.0 1398,1172.0 1404,1172.0 1410,1172.7 1416,1171.4 1422,1172.8 1428,1172.8 1434,1172.5 1440,1172.6 1446,1172.1 1452,1172.9 1458,1173.0 1464,1172.6 1470,1172.7 1476,1172.1 1482,1172.9 1488,1170.8 1494,1171.5 1500,1172.6 1506,1172.4 1512,1172.1 1518,1172.1 1524,1172.7 1530,1170.9 1536,1170.5 1542,1171.8 1548,1171.8 1554,1172.8 1560,1172.7 1566,1172.1 1572,1172.3 1578,1170.9 1584,1172.6 1590,1172.9 1596,1170.6 1602,1171.7 1608,1172.6 1614,1171.6 1620,1172.9 1626,1171.7 1632,1170.6 1638,1170.8 1644,1171.3 1650,1172.3 1656,1172.1 1662,1172.6 1668,1171.1 1674,1171.7 1680,1171.1 1686,1172.2 1692,1172.4 1698,1171.0 1704,1170.5 1710,1170.9 1716,1171.0 1722,1171.0 1728,1171.2 1734,1172.4 1740,1171.7 1746,1172.1 1752,1172.9 1758,1172.9 1764,1172.3 1770,1172.4 1776,1171.3 1782,1170.6 1788,1171.9 1794,1170.7 1800,1170.5 1806,1170.6 1812,1172.1 1818,1172.4 1824,1172.4 1830,1172.5 1836,1172.5 1842,1171.4 1848,1170.7 1854,1170.9 1860,1171.8 1866,1171.4 1872,1171.0 1878,1172.8 1884,1171.3 1890,1170.7 1896,1171.0" fill="none" stroke="#e01010" stroke-width="1"/><polyline points="1290,1171.1 1296,1171.8 1302,1172.6 1308,1171.0 1314,1172.2 1320,1171.0 1326,1170.6 1332,1172.0 1338,1172.0 1344,1170.6 1350,1171.2 1356,1172.6 1362,1172.7 1368,1172.6 1374,1170.7 1380,1171.0 1386,1172.6 1392,1170.9 1398,1170.5 1404,1171.4 1410,1172.1 1416,1171.6 1422,1172.7 1428,1173.0 1434,1170.6 1440,1171.4 1446,1171.7 1452,1170.7 1458,1171.9 1464,1170.8 1470,1170.9 1476,1172.5 1482,1172.4 1488,1172.3 1494,1172.4 1500,1171.5 1506,1172.4 1512,1172.0 1518,1172.7 1524,1170.7 1530,1172.1 1536,1171.9 1542,1171.5 1548,1170.7 1554,1171.9 1560,1170.7 1566,1171.7 1572,1171.7 1578,1171.7 1584,1173.0 1590,1171.9 1596,1172.5 1602,1173.0 1608,1171.0 1614,1172.6 1620,1171.8 1626,1171.2 1632,1171.6 1638,1172.2 1644,1171.7 1650,1171.6 1656,1171.0 1662,1172.7 1668,1171.6 1674,1172.4 1680,1172.3 1686,1171.1 1692,1171.7 1698,1171.6 1704,1171.1 1710,1170.7 1716,1171.9 1722,1171.5 1728,1171.7 1734,1171.7 1740,1171.3 1746,1171.9 1752,1171.7 1758,1171.8 1764,1170.6 1770,1171.3 1776,1170.8 1782,1170.6 1788,1172.4 1794,1171.6 1800,1170.6 1806,1170.9 1812,1172.7 1818,1172.7 1824,1171.9 1830,1172.8 1836,1172.4 1842,1172.8 1848,1171.3 1854,1171.0 1860,1170.8 1866,1172.6 1872,1171.2 1878,1171.3 1884,1172.6 1890,1170.8 1896,1170.6" fill="none" stroke="#1a3aff" stroke-width="1"/><line x1="1167" y1="1174" x2="1956" y2="494" stroke="#f0d8d8" stroke-width="3.4"/><line x1="1167" y1="1174" x2="1956" y2="494" stroke="#ffffff" stroke-width="2"/><circle cx="1956" cy="494" r="8.5" fill="#ffffff"/><circle cx="1167.5" cy="1174" r="8.5" fill="#000" stroke="#fff" stroke-width="2.6"/><g stroke="#dcdcdc" stroke-width="2.6"><line x1="1961" y1="364.5" x2="1979" y2="380"/><line x1="1979" y1="364.5" x2="1961" y2="380"/></g><polyline points="1285.0,1211.5 1291.5,1219.5 1298.0,1211.5" fill="none" stroke="#e0e0e0" stroke-width="2.2"/><polyline points="1847.5,1211.5 1854,1219.5 1860.5,1211.5" fill="none" stroke="#e0e0e0" stroke-width="2.2"/><polyline points="1328.3,1355.5 1334.3,1363.5 1340.3,1355.5" fill="none" stroke="#e0e0e0" stroke-width="2.2"/><polyline points="1916.5,1355.5 1923,1363.5 1929.5,1355.5" fill="none" stroke="#e0e0e0" stroke-width="2.2"/><polygon points="1980.50,1360.00 1980.26,1362.44 1976.55,1363.54 1975.69,1365.14 1976.84,1368.84 1974.94,1370.39 1971.54,1368.55 1969.80,1369.07 1968.00,1372.50 1965.56,1372.26 1964.46,1368.55 1962.86,1367.69 1959.16,1368.84 1957.61,1366.94 1959.45,1363.54 1958.93,1361.80 1955.50,1360.00 1955.74,1357.56 1959.45,1356.46 1960.31,1354.86 1959.16,1351.16 1961.06,1349.61 1964.46,1351.45 1966.20,1350.93 1968.00,1347.50 1970.44,1347.74 1971.54,1351.45 1973.14,1352.31 1976.84,1351.16 1978.39,1353.06 1976.55,1356.46 1977.07,1358.20" fill="#a8a8a8" transform="rotate(11 1968 1360)"/><circle cx="1968" cy="1360" r="4.75" fill="#4a4a4a"/></svg>
<div class="tx" style="left:1519.87px;top:359.80px;font-size:24px;line-height:27px;color:#e4e4e4;transform:scaleX(0.9278)">Curves</div>
<div class="tx" style="left:1160.40px;top:412.00px;font-size:24px;line-height:27px;color:#e4e4e4;transform:scaleX(0.9625)">Add Preset</div>
<div class="tx" style="left:1697.98px;top:412.40px;font-size:24px;line-height:27px;color:#e4e4e4;transform:scaleX(1.0183)">Merge</div>
<div class="tx" style="left:1802.92px;top:412.40px;font-size:24px;line-height:27px;color:#e4e4e4;transform:scaleX(0.9834)">Delete</div>
<div class="tx" style="left:1907.41px;top:412.40px;font-size:24px;line-height:27px;color:#e4e4e4;transform:scaleX(0.8932)">Reset</div>
<div class="tx" style="left:1167.61px;top:1203.40px;font-size:24px;line-height:27px;color:#ffffff;transform:scaleX(0.7920)">RGB</div>
<div class="tx" style="left:1326.09px;top:1203.40px;font-size:24px;line-height:27px;color:#ffffff;transform:scaleX(0.9122)">Master</div>
<div class="tx" style="left:1893.26px;top:1203.80px;font-size:24px;line-height:27px;color:#e4e4e4;transform:scaleX(0.9393)">Picker</div>
<div class="tx" style="left:1158.60px;top:1255.90px;font-size:24px;line-height:27px;color:#a9a9a9;transform:scaleX(0.7997)">X:</div>
<div class="tx" style="left:1192.30px;top:1255.90px;font-size:24px;line-height:27px;color:#ffffff;transform:scaleX(0.8692)">0</div>
<div class="tx" style="left:1294.50px;top:1255.90px;font-size:24px;line-height:27px;color:#a9a9a9;transform:scaleX(0.7875)">Y:</div>
<div class="tx" style="left:1327.40px;top:1255.90px;font-size:24px;line-height:27px;color:#ffffff;transform:scaleX(0.8692)">0</div>
<div class="tx" style="left:1641.84px;top:1255.60px;font-size:24px;line-height:27px;color:#a9a9a9;transform:scaleX(0.9561)">Min:</div>
<div class="tx" style="left:1700.20px;top:1255.60px;font-size:24px;line-height:27px;color:#ffffff;transform:scaleX(0.8615)">0</div>
<div class="tx" style="left:1802.10px;top:1255.60px;font-size:24px;line-height:27px;color:#a9a9a9;transform:scaleX(0.9019)">Max:</div>
<div class="tx" style="left:1864.29px;top:1255.60px;font-size:24px;line-height:27px;color:#ffffff;transform:scaleX(0.7083)">1</div>
<div class="tx" style="left:1143.80px;top:1347.60px;font-size:24px;line-height:27px;color:#a9a9a9;transform:scaleX(0.9032)">Opacity:</div>
<div class="tx" style="left:1241.73px;top:1347.60px;font-size:24px;line-height:27px;color:#ffffff;transform:scaleX(0.8694)">100 %</div>
<div class="tx" style="left:1546.88px;top:1347.90px;font-size:24px;line-height:27px;color:#a9a9a9;transform:scaleX(0.9199)">Blend Mode:</div>
<div class="tx" style="left:1685.75px;top:1347.90px;font-size:24px;line-height:27px;color:#ffffff;transform:scaleX(0.9465)">Normal</div>
</body></html>
